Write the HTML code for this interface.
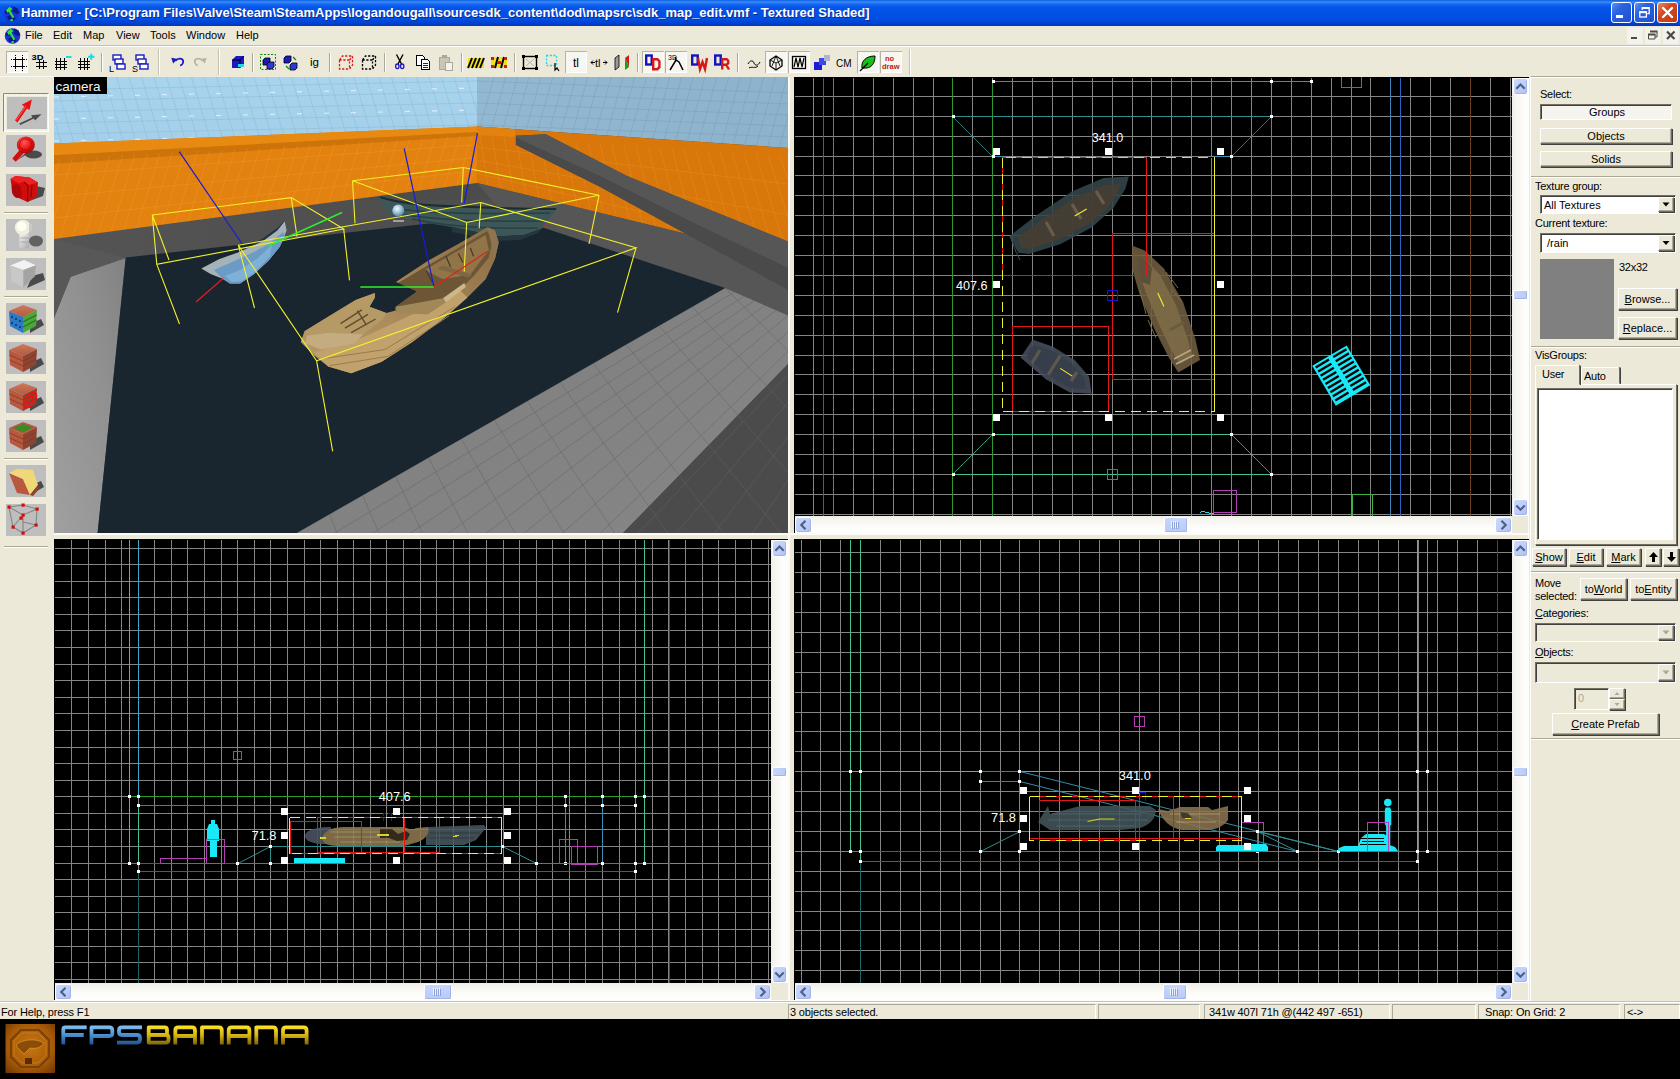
<!DOCTYPE html>
<html><head><meta charset="utf-8"><title>Hammer</title>
<style>
*{box-sizing:border-box;margin:0;padding:0}
html,body{width:1680px;height:1079px;overflow:hidden;background:#ece9d8;font-family:"Liberation Sans",sans-serif;font-size:11px;color:#000}
.a{position:absolute}
svg{position:absolute;overflow:hidden;display:block}
.t{position:absolute;white-space:nowrap;line-height:1}
.btn{position:absolute;background:#ece9d8;border:1px solid;border-color:#fff #716f64 #716f64 #fff;box-shadow:1px 1px 0 #404040, inset -1px -1px 0 #aca899;text-align:center;white-space:nowrap}
.sunk{position:absolute;border:1px solid;border-color:#716f64 #fff #fff #716f64;box-shadow:inset 1px 1px 0 #404040}
.sb{position:absolute;background:linear-gradient(90deg,#f3f1ec,#fefefb 40%,#fefefb)}
.sbh{position:absolute;background:linear-gradient(180deg,#f3f1ec,#fefefb 40%,#fefefb)}
.sbb{position:absolute;background:linear-gradient(135deg,#cbdafc,#b9cbf8);border:1px solid #fff;border-radius:3px;box-shadow:0 0 0 1px #b4c4ee inset}
</style></head><body>
<div class="a" style="left:0;top:0;width:1680px;height:26px;background:linear-gradient(180deg,#0a5ee0 0,#3a8cf8 2px,#1868f0 4px,#0455ea 7px,#0250e6 14px,#024ee2 19px,#0142d0 23px,#0138b8 26px)"></div>
<svg style="left:3px;top:5px" width="17" height="17" viewBox="0 0 16 16"><circle cx="8" cy="8.4" r="7.3" fill="#1c34d4"/><path d="M1.5 6l3-3.5 2.5 2.5-1.5 3-3 .5zM9.5 1.5l4 1.5 2 4.5-3 1-3.5-2.5zM4 10.5l4.5-1 3.5 3-3 3-4.5-2z" fill="#0b1a8c"/><path d="M2.8 4.6l3.4-3 2.6 2.2-1.8 1.7 3.6 6-1.7 1-3.4-5.9-1.2.9z" fill="#2ee82e"/><path d="M7.2 13.2l2.2.3-.3 2-2.2-.4z" fill="#2ee82e"/></svg>
<div class="t" style="left:21px;top:6px;font-size:13px;font-weight:bold;color:#fff;text-shadow:1px 1px 0 #0a2a8a;letter-spacing:0px" id="ttl">Hammer - [C:\Program Files\Valve\Steam\SteamApps\logandougall\sourcesdk_content\dod\mapsrc\sdk_map_edit.vmf - Textured Shaded]</div>
<div class="a" style="left:1611px;top:2px;width:21px;height:21px;border:1px solid #fff;border-radius:3px;background:linear-gradient(135deg,#5a93f3 0,#2a62e0 35%,#1e50d0 100%)"><svg width="21" height="21" style="left:-1px;top:-1px" viewBox="0 0 21 21"><rect x="5" y="13" width="7" height="3" fill="#fff"/></svg></div>
<div class="a" style="left:1634px;top:2px;width:21px;height:21px;border:1px solid #fff;border-radius:3px;background:linear-gradient(135deg,#5a93f3 0,#2a62e0 35%,#1e50d0 100%)"><svg width="21" height="21" style="left:-1px;top:-1px" viewBox="0 0 21 21"><path d="M8.2 8V6h7v5.6h-2" fill="none" stroke="#fff" stroke-width="1.3"/><path d="M8 6h7.4" stroke="#fff" stroke-width="2"/><rect x="5.8" y="10" width="6.6" height="5" fill="none" stroke="#fff" stroke-width="1.3"/><path d="M5.4 10.2h7.4" stroke="#fff" stroke-width="2"/></svg></div>
<div class="a" style="left:1657px;top:2px;width:21px;height:21px;border:1px solid #fff;border-radius:3px;background:linear-gradient(135deg,#e8895f 0,#d5471f 40%,#c23a12 100%)"><svg width="21" height="21" style="left:-1px;top:-1px" viewBox="0 0 21 21"><path d="M6 6l9 9M15 6l-9 9" stroke="#fff" stroke-width="2.4" stroke-linecap="round"/></svg></div>
<div class="a" style="left:0;top:26px;width:1680px;height:20px;background:#ece9d8"></div>
<svg style="left:4px;top:27px" width="17" height="17" viewBox="0 0 16 16"><circle cx="8" cy="8.4" r="7.3" fill="#1c34d4"/><path d="M1.5 6l3-3.5 2.5 2.5-1.5 3-3 .5zM9.5 1.5l4 1.5 2 4.5-3 1-3.5-2.5zM4 10.5l4.5-1 3.5 3-3 3-4.5-2z" fill="#0b1a8c"/><path d="M2.8 4.6l3.4-3 2.6 2.2-1.8 1.7 3.6 6-1.7 1-3.4-5.9-1.2.9z" fill="#2ee82e"/><path d="M7.2 13.2l2.2.3-.3 2-2.2-.4z" fill="#2ee82e"/></svg>
<div class="t" style="left:25px;top:30px;font-size:11px">File</div>
<div class="t" style="left:53px;top:30px;font-size:11px">Edit</div>
<div class="t" style="left:83px;top:30px;font-size:11px">Map</div>
<div class="t" style="left:116px;top:30px;font-size:11px">View</div>
<div class="t" style="left:150px;top:30px;font-size:11px">Tools</div>
<div class="t" style="left:186px;top:30px;font-size:11px">Window</div>
<div class="t" style="left:236px;top:30px;font-size:11px">Help</div>
<svg style="left:1626px;top:27px" width="54" height="18" viewBox="0 0 54 18">
<rect x="1" y="0.5" width="15.5" height="16.5" fill="#f3f2ec"/><rect x="19" y="0.5" width="15.5" height="16.5" fill="#f3f2ec"/><rect x="37" y="0.5" width="15.5" height="16.5" fill="#f3f2ec"/>
<rect x="5" y="10" width="6" height="2" fill="#4a4a46"/>
<path d="M24.5 4.5h6.5v5.5h-2M22.5 7.5h6.5v4.5h-6.5z" fill="none" stroke="#4a4a46" stroke-width="1"/><path d="M24 4.5h7.5M22 7.5h7.5" stroke="#4a4a46" stroke-width="2"/>
<path d="M41 4.5l7.5 7.5M48.5 4.5l-7.5 7.5" stroke="#4a4a46" stroke-width="2.2"/></svg>
<div class="a" style="left:0;top:45px;width:1680px;height:1px;background:#c5c2b2"></div>
<div class="a" style="left:0;top:46px;width:1680px;height:1px;background:#fff"></div>
<div class="a" style="left:0;top:47px;width:1680px;height:30px;background:#ece9d8" id="tb"></div>
<div class="a" style="left:0;top:77px;width:54px;height:926px;background:#ece9d8"></div>
<div class="a" style="left:0;top:76px;width:54px;height:1px;background:#f8f7f0"></div>
<div class="a" style="left:0;top:1001px;width:1680px;height:19px;background:#ece9d8"></div>
<div class="a" style="left:0;top:1001px;width:1680px;height:1px;background:#c5c2b2"></div>
<div class="a" style="left:0;top:1002px;width:1680px;height:1px;background:#fff"></div>
<div class="t" style="left:1px;top:1007px;font-size:11px;letter-spacing:-0.15px">For Help, press F1</div>
<div class="t" style="left:790px;top:1007px;font-size:11px;letter-spacing:-0.15px">3 objects selected.</div>
<div class="t" style="left:1209px;top:1007px;font-size:11px;letter-spacing:-0.15px">341w 407l 71h @(442 497 -651)</div>
<div class="t" style="left:1485px;top:1007px;font-size:11px;letter-spacing:-0.15px">Snap: On Grid: 2</div>
<div class="t" style="left:1627px;top:1007px;font-size:11px;letter-spacing:-0.15px">&lt;-&gt;</div>
<div class="a" style="left:788px;top:1004px;width:308px;height:16px;border:1px solid;border-color:#aca899 #fff #fff #aca899"></div>
<div class="a" style="left:1098px;top:1004px;width:102px;height:16px;border:1px solid;border-color:#aca899 #fff #fff #aca899"></div>
<div class="a" style="left:1204px;top:1004px;width:186px;height:16px;border:1px solid;border-color:#aca899 #fff #fff #aca899"></div>
<div class="a" style="left:1392px;top:1004px;width:84px;height:16px;border:1px solid;border-color:#aca899 #fff #fff #aca899"></div>
<div class="a" style="left:1478px;top:1004px;width:142px;height:16px;border:1px solid;border-color:#aca899 #fff #fff #aca899"></div>
<div class="a" style="left:1624px;top:1004px;width:56px;height:16px;border:1px solid;border-color:#aca899 #fff #fff #aca899"></div>
<div class="a" style="left:0;top:1019px;width:1680px;height:60px;background:#000"></div>
<div class="a" style="left:54px;top:77px;width:1476px;height:924px;background:#ece9d8"></div>
<div class="a" style="left:788px;top:77px;width:2px;height:924px;background:#fbfaf6"></div>
<div class="a" style="left:54px;top:533px;width:1476px;height:2px;background:#fbfaf6"></div>
<div class="a" style="left:1528px;top:77px;width:1px;height:924px;background:#fbfaf6"></div>
<div class="a" style="left:54px;top:1000px;width:1476px;height:1px;background:#fbfaf6"></div>
<svg style="left:54px;top:77px;background:#4c4c4c" width="734" height="456" viewBox="54 77 734 456">
<defs>
<linearGradient id="skyL" x1="0" y1="0" x2="0" y2="1"><stop offset="0" stop-color="#a9d4ee"/><stop offset="1" stop-color="#a4cfea"/></linearGradient>
<linearGradient id="skyR" x1="0" y1="0" x2="1" y2="0"><stop offset="0" stop-color="#93b9d2"/><stop offset="1" stop-color="#8db2cb"/></linearGradient>
<linearGradient id="flr" x1="0" y1="0" x2="1" y2="1"><stop offset="0" stop-color="#7e7e7e"/><stop offset="1" stop-color="#868686"/></linearGradient>
<linearGradient id="flrL" x1="1" y1="0" x2="0" y2="1"><stop offset="0" stop-color="#828282"/><stop offset="0.4" stop-color="#919191"/><stop offset="1" stop-color="#a0a0a0"/></linearGradient>
<linearGradient id="ledge" x1="0" y1="0" x2="1" y2="0"><stop offset="0" stop-color="#545454"/><stop offset="0.5" stop-color="#4e4e4e"/><stop offset="1" stop-color="#565656"/></linearGradient>
<linearGradient id="boat3" x1="0" y1="1" x2="1" y2="0"><stop offset="0" stop-color="#b89a68"/><stop offset="0.5" stop-color="#a88858"/><stop offset="1" stop-color="#8a6c44"/></linearGradient>
<radialGradient id="orb" cx="0.4" cy="0.35" r="0.7"><stop offset="0" stop-color="#f4fbff"/><stop offset="0.5" stop-color="#9cc4dc"/><stop offset="1" stop-color="#4a7892"/></radialGradient>
<clipPath id="cpF"><polygon points="725,288 788,315.5 788,364 623,533 296.6,533"/></clipPath><clipPath id="cpD"><polygon points="788,364 788,533 623,533"/></clipPath><clipPath id="cpL"><polygon points="54,77 477,77 477,127 54,144"/></clipPath><clipPath id="cpR"><polygon points="477,77 788,77 788,148 477,126.5"/></clipPath>
<clipPath id="cpWL"><polygon points="54,159 477,135 477,183 54,239"/></clipPath><clipPath id="cpWR"><polygon points="477,135 788,156 788,260 685,233.5 477,183"/></clipPath>
</defs>
<polygon points="54,200 788,200 788,400 54,400" fill="url(#ledge)" />
<polygon points="54,77 477,77 477,127 54,144" fill="url(#skyL)" />
<polygon points="477,77 788,77 788,148 477,126.5" fill="url(#skyR)" />
<path d="M41.5 77L61.5 143.7M54.0 77L73.9 143.2M66.5 77L86.2 142.7M79.0 77L98.6 142.2M91.5 77L110.9 141.7M104.0 77L123.3 141.2M116.5 77L135.6 140.7M129.0 77L148.0 140.2M141.5 77L160.3 139.7M154.0 77L172.7 139.2M166.5 77L185.0 138.7M179.0 77L197.4 138.2M191.5 77L209.7 137.7M204.0 77L222.1 137.2M216.5 77L234.4 136.7M229.0 77L246.8 136.2M241.5 77L259.1 135.7M254.0 77L271.5 135.2M266.5 77L283.8 134.7M279.0 77L296.2 134.2M291.5 77L308.5 133.7M304.0 77L320.9 133.2M316.5 77L333.2 132.7M329.0 77L345.6 132.2M341.5 77L357.9 131.7M354.0 77L370.3 131.2M366.5 77L382.6 130.7M379.0 77L395.0 130.2M391.5 77L407.3 129.7M404.0 77L419.7 129.2M416.5 77L432.0 128.7M429.0 77L444.4 128.2M441.5 77L456.7 127.7M454.0 77L469.1 127.2M466.5 77L481.4 126.7M479.0 77L493.8 126.2M491.5 77L506.1 125.7" stroke="#86afca" stroke-width="0.7" opacity="0.55" fill="none" clip-path="url(#cpL)"/>
<path d="M54 90L477 81M54 101L477 92M54 112L477 103M54 123L477 114M54 134L477 125M54 145L477 136" stroke="#86afca" stroke-width="0.7" opacity="0.55" fill="none" clip-path="url(#cpL)"/>
<path d="M54 97L477 88M54 119L477 110M54 141L477 132" stroke="#e8f4fc" stroke-width="1.2" stroke-dasharray="5 22" opacity="0.8" fill="none" clip-path="url(#cpL)"/>
<path d="M494.1 77L480.0 127.2M505.8 77L491.5 128.0M517.5 77L503.0 128.8M529.2 77L514.5 129.6M541.0 77L526.0 130.4M552.7 77L537.5 131.2M564.4 77L549.0 132.0M576.1 77L560.5 132.8M587.9 77L572.0 133.7M599.6 77L583.5 134.5M611.3 77L595.0 135.3M623.0 77L606.5 136.1M634.8 77L618.0 136.9M646.5 77L629.5 137.7M658.2 77L641.0 138.5M669.9 77L652.5 139.3M681.7 77L664.0 140.1M693.4 77L675.5 140.9M705.1 77L687.0 141.7M716.8 77L698.5 142.5M728.6 77L710.0 143.3M740.3 77L721.5 144.1M752.0 77L733.0 144.9M763.7 77L744.5 145.7M775.5 77L756.0 146.5M787.2 77L767.5 147.3M798.9 77L779.0 148.1M810.6 77L790.5 148.9M822.4 77L802.0 149.8M834.1 77L813.5 150.6M477 81L788 93M477 92L788 104M477 103L788 115M477 114L788 126M477 125L788 137M477 136L788 148" stroke="#7398b2" stroke-width="0.7" opacity="0.55" fill="none" clip-path="url(#cpR)"/>
<polygon points="54,143.5 477,126.5 477,183 54,239" fill="#e3820e" />
<polygon points="54,143.5 477,126.5 477,132 54,155.3" fill="#e88a12" />
<polygon points="54,155.3 477,132 477,136 54,163.7" fill="#cc730a" />
<polygon points="477,126.5 788,148 788,260 685,233.5 477,183" fill="#d9770a" />
<polygon points="477,126.5 515,129 515,137 477,135" fill="#e3820e" />
<path d="M60.0 158.7L34.0 242.7M72.5 158.0L46.5 242.0M85.0 157.2L59.0 241.2M97.5 156.5L71.5 240.5M110.0 155.8L84.0 239.8M122.5 155.1L96.5 239.1M135.0 154.4L109.0 238.4M147.5 153.7L121.5 237.7M160.0 153.0L134.0 237.0M172.5 152.3L146.5 236.3M185.0 151.6L159.0 235.6M197.5 150.9L171.5 234.9M210.0 150.2L184.0 234.2M222.5 149.4L196.5 233.4M235.0 148.7L209.0 232.7M247.5 148.0L221.5 232.0M260.0 147.3L234.0 231.3M272.5 146.6L246.5 230.6M285.0 145.9L259.0 229.9M297.5 145.2L271.5 229.2M310.0 144.5L284.0 228.5M322.5 143.8L296.5 227.8M335.0 143.1L309.0 227.1M347.5 142.4L321.5 226.4M360.0 141.6L334.0 225.6M372.5 140.9L346.5 224.9M385.0 140.2L359.0 224.2M397.5 139.5L371.5 223.5M410.0 138.8L384.0 222.8M422.5 138.1L396.5 222.1M435.0 137.4L409.0 221.4M447.5 136.7L421.5 220.7M460.0 136.0L434.0 220.0M472.5 135.3L446.5 219.3M485.0 134.6L459.0 218.6M497.5 133.9L471.5 217.9M510.0 133.1L484.0 217.1M522.5 132.4L496.5 216.4M535.0 131.7L509.0 215.7M547.5 131.0L521.5 215.0M54 175.0L477 144.6M54 196.6L477 157.6M54 218.2L477 170.5" stroke="#f2a448" stroke-width="0.7" opacity="0.42" fill="none" clip-path="url(#cpWL)"/>
<path d="M480.0 135.2L494.0 225.2M492.0 136.0L506.6 226.0M504.0 136.8L519.2 226.8M516.0 137.6L531.8 227.6M528.0 138.4L544.4 228.4M540.0 139.3L557.0 229.3M552.0 140.1L569.6 230.1M564.0 140.9L582.2 230.9M576.0 141.7L594.8 231.7M588.0 142.5L607.4 232.5M600.0 143.3L620.0 233.3M612.0 144.1L632.6 234.1M624.0 144.9L645.2 234.9M636.0 145.7L657.8 235.7M648.0 146.5L670.4 236.5M660.0 147.4L683.0 237.4M672.0 148.2L695.6 238.2M684.0 149.0L708.2 239.0M696.0 149.8L720.8 239.8M708.0 150.6L733.4 240.6M720.0 151.4L746.0 241.4M732.0 152.2L758.6 242.2M744.0 153.0L771.2 243.0M756.0 153.8L783.8 243.8M768.0 154.6L796.4 244.6M780.0 155.5L809.0 245.5M792.0 156.3L821.6 246.3M804.0 157.1L834.2 247.1M477 147.0L788 184.0M477 160.2L788 214.8M477 173.4L788 245.6" stroke="#eea040" stroke-width="0.7" opacity="0.38" fill="none" clip-path="url(#cpWR)"/>
<polygon points="515.8,135.8 545.8,134.2 627,176 693,203 788,241.5 788,290 685,233.5 600,187 515.8,145" fill="#4a4a4a" />
<polygon points="515.8,135.8 545.8,134.2 627,176 693,203 788,241.5 788,268 690,221 600,176 515.8,137.5" fill="#565656" />
<polygon points="477,183 685,233.5 788,290 788,316 725,288 505,215" fill="#565656" />
<polygon points="725,288 788,315.5 788,364 623,533 296.6,533" fill="url(#flr)" />
<path d="M1037.7 109.2L-148.1 787.3M1037.7 109.2L-87.3 787.3M1037.7 109.2L-26.5 787.3M1037.7 109.2L34.3 787.3M1037.7 109.2L95.1 787.3M1037.7 109.2L155.9 787.3M1037.7 109.2L216.7 787.3M1037.7 109.2L277.5 787.3M1037.7 109.2L338.3 787.3M1037.7 109.2L399.1 787.3M1037.7 109.2L459.9 787.3M1037.7 109.2L520.7 787.3M1037.7 109.2L581.5 787.3M1037.7 109.2L642.3 787.3M296.6 533.0L483.9 1055.5M329.6 514.2L533.3 1027.2M362.5 495.3L582.8 999.0M395.5 476.5L632.2 970.7M428.4 457.6L681.6 942.4M461.4 438.8L731.1 914.2M494.3 419.9L780.5 885.9M527.3 401.1L829.9 857.6M560.2 382.2L879.3 829.3M593.2 363.4L928.8 801.1M626.1 344.5L978.2 772.8M659.1 325.7L1027.6 744.5M692.0 306.8L1077.1 716.3M725.0 288.0L1126.5 688.0M758.0 269.2L1175.9 659.7M790.9 250.3L1225.4 631.5" stroke="#6c6c6c" stroke-width="0.9" opacity="0.75" fill="none" clip-path="url(#cpF)"/>
<polygon points="788,364 788,533 623,533" fill="#4b4b4b" />
<path d="M1037.7 109.2L-148.1 787.3M1037.7 109.2L-87.3 787.3M1037.7 109.2L-26.5 787.3M1037.7 109.2L34.3 787.3M1037.7 109.2L95.1 787.3M1037.7 109.2L155.9 787.3M1037.7 109.2L216.7 787.3M1037.7 109.2L277.5 787.3M1037.7 109.2L338.3 787.3M1037.7 109.2L399.1 787.3M1037.7 109.2L459.9 787.3M1037.7 109.2L520.7 787.3M1037.7 109.2L581.5 787.3M1037.7 109.2L642.3 787.3M296.6 533.0L483.9 1055.5M329.6 514.2L533.3 1027.2M362.5 495.3L582.8 999.0M395.5 476.5L632.2 970.7M428.4 457.6L681.6 942.4M461.4 438.8L731.1 914.2M494.3 419.9L780.5 885.9M527.3 401.1L829.9 857.6M560.2 382.2L879.3 829.3M593.2 363.4L928.8 801.1M626.1 344.5L978.2 772.8M659.1 325.7L1027.6 744.5M692.0 306.8L1077.1 716.3M725.0 288.0L1126.5 688.0M758.0 269.2L1175.9 659.7M790.9 250.3L1225.4 631.5" stroke="#606060" stroke-width="0.9" opacity="0.7" fill="none" clip-path="url(#cpD)"/>
<polygon points="125.7,258 70.7,276.7 54,318 54,533 97.6,533" fill="url(#flrL)" />
<polygon points="54,239 54,318 70.7,276.7 125.7,258" fill="#585858" />
<polygon points="125.7,257.5 505,215 725,288 296.6,533 97.6,533" fill="#19262f" />
<polygon points="378.3,195.7 399.3,202.3 428.1,204.2 462.1,204.9 504.1,208.2 557.7,208.2 549.9,218 542,228.5 523.7,235 497.5,236.3 451.7,227.1 412.4,220.6 388.8,214 381,202.3" fill="#3d5759" />
<path d="M392 208C430 214 480 214 550 213M400 214C440 221 490 222 546 221M412 219C450 227 500 229 538 228" stroke="#2a3f42" stroke-width="1.6" fill="none"/>
<path d="M380 197C400 204 430 206 462 206.5C500 208 530 209.5 556 209" stroke="#1e2c30" stroke-width="2" fill="none"/>
<polygon points="451.7,227.1 497.5,236.3 523.7,235 542,228.5 538,233 520,240 495,241 452,232" fill="#25363f" />
<polygon points="240,252 263.4,238 277.3,228 284.7,220.5 283,226 270,238 250,250" fill="#25313f" />
<polygon points="201.3,268.6 218.9,259.3 239.3,251.9 263.4,240.8 277.3,230.6 284.7,221.3 286.6,230.6 280.1,246.3 269,260.2 254.1,274.1 240.2,283.4 230,283.4 222.6,278.8 210.6,274.1" fill="#a5b2b8" />
<polygon points="214,270 232,262 252,253 270,243 283,232 285,236 279,248 268,261 253,275 240,283.4 230,283.4 222.6,278.8" fill="#6a9cc6" />
<polygon points="225,276 240,270 258,258 272,245 270,256 256,271 242,281 232,282" fill="#7fb0d6" />
<polygon points="300.7,341.9 304.5,331.2 334.3,312.9 355.7,299.9 374.9,293.0 395.5,282.3 427.6,260.9 458.2,244.1 487.2,227.2 494.9,230.3 498.7,242.5 494.9,259.3 485.7,279.2 467.4,297.6 442.9,319.0 412.3,341.9 381.7,361.8 351.2,373.3 328.2,366.4 314.5,355.7" fill="url(#boat3)" />
<polygon points="314.5,352.6 363.4,337.3 412.3,314.4 458.2,288.4 467.4,297.6 442.9,319.0 412.3,341.9 381.7,361.8 351.2,373.3 328.2,366.4" fill="#c2a26c" />
<path d="M322.1 358.7 L384.8 349.6 L455.1 306.7 M329.8 365.6 L387.9 356.4 L449.0 315.9" stroke="#9a7c4c" stroke-width="1" fill="none"/>
<polygon points="395.5,284.6 427.6,265.5 458.2,247.9 487.2,231.1 492.6,239.5 488.8,257.8 473.5,276.2 465.8,283.8 442.9,300.6 397.0,312.9 395.5,306.7 416.9,291.5" fill="#6c5636" />
<polygon points="424.6,270.0 485.7,234.9 488.8,250.2 470.4,274.6 442.9,279.2" fill="#917548" />
<path d="M426.1 270.0 L432.2 282.3 M446.0 256.3 L450.6 267.0 M458.2 253.2 L462.8 262.4 M470.4 247.9 L473.5 256.3" stroke="#4a3b26" stroke-width="1.3" fill="none"/>
<polygon points="436.8,268.5 442.9,265.5 472.0,274.6 468.9,277.7" fill="#7d6744" />
<polygon points="442.9,298.3 464.3,283.0 465.8,286.9 446.0,302.2" fill="#cdb68a" />
<polygon points="395.5,306.7 442.9,298.3 446.0,302.2 427.6,314.4 397.0,312.9" fill="#a08858" />
<polygon points="374.9,292.2 395.5,281.8 416.9,291.5 395.5,306.7 395.5,310.6 386.3,312.9 369.5,306.7 374.9,297.6" fill="#19262f" />
<polygon points="304.5,331.2 334.3,312.9 355.7,299.9 374.9,293.0 374.9,297.6 369.5,306.7 386.3,312.9 383.3,319.0 363.4,334.3 328.2,332.7 306.8,335.8" fill="#b59a66" />
<path d="M340.5 323.6 L361.9 309.8 M345.0 328.1 L368.0 314.4 M351.2 332.7 L375.6 319.0 M357.3 310.6 L366.5 325.1" stroke="#5e4c30" stroke-width="1.4" fill="none"/>
<polygon points="306.8,335.8 328.2,332.7 363.4,334.3 354.2,343.4 320.6,349.6 305.3,343.4" fill="#c4ac80" />
<polygon points="487.2,227.2 494.9,230.3 498.7,242.5 494.9,259.3 491.8,245.6" fill="#8f7450" />
<!--3DAXES-->
<path d="M152.3 215L291.3 197.6L343.7 229L156.8 264.4ZM152.3 215L169 260M291.3 197.6L297 236.5M343.7 229L349.5 280.4M156.8 264.4L179.5 324M352.5 180.8L463.3 167.5L599 195.3L466.7 222.5ZM352.5 180.8L355 223.3M463.3 167.5L461.7 202.5M599 195.3L589 244M466.7 222.5L464.2 271.7M238.4 245.3L480.8 202.5L636 247.8L316.6 360.8ZM238.4 245.3L254.5 308M480.8 202.5L479.2 228.3M636 247.8L617.5 312.6M316.6 360.8L332.7 451.4" stroke="#f2f22a" stroke-width="1.1" fill="none"/>
<path d="M179.3 151.7L242.2 244M477.5 133L464.2 203.3M404.2 148.3L433.9 287" stroke="#1a1ad8" stroke-width="1.2" fill="none"/>
<path d="M342 212.5L268 246M360.3 287L433.9 287" stroke="#2cf02c" stroke-width="1.4" fill="none"/>
<path d="M196 302L223 278.5M433.9 287L487.5 251.3M543 227l4-2" stroke="#e02020" stroke-width="1.2" fill="none"/>
<circle cx="398.3" cy="210.5" r="6" fill="url(#orb)"/><path d="M393 221h11" stroke="#d8d8d8" stroke-width="1.2"/>
<rect x="54" y="77" width="53" height="17" fill="#000"/><text x="55.5" y="90.5" font-family="Liberation Sans" font-size="13" fill="#f4f4f4" textLength="45" lengthAdjust="spacingAndGlyphs">camera</text>
</svg>
<svg style="left:794px;top:77px;background:#000" width="718" height="439" viewBox="794 77 718 439" shape-rendering="crispEdges">
<path d="M813.5 78V516M833.5 78V516M853.5 78V516M873.5 78V516M893.5 78V516M913.5 78V516M933.5 78V516M952.5 78V516M972.5 78V516M992.5 78V516M1012.5 78V516M1032.5 78V516M1052.5 78V516M1072.5 78V516M1092.5 78V516M1112.5 78V516M1132.5 78V516M1151.5 78V516M1171.5 78V516M1191.5 78V516M1211.5 78V516M1231.5 78V516M1251.5 78V516M1271.5 78V516M1291.5 78V516M1311.5 78V516M1331.5 78V516M1351.5 78V516M1370.5 78V516M1390.5 78V516M1410.5 78V516M1430.5 78V516M1450.5 78V516M1470.5 78V516M1490.5 78V516M1510.5 78V516M795 96.5H1512M795 116.5H1512M795 136.5H1512M795 156.5H1512M795 175.5H1512M795 195.5H1512M795 215.5H1512M795 235.5H1512M795 255.5H1512M795 275.5H1512M795 295.5H1512M795 315.5H1512M795 335.5H1512M795 355.5H1512M795 374.5H1512M795 394.5H1512M795 414.5H1512M795 434.5H1512M795 454.5H1512M795 474.5H1512M795 494.5H1512M795 514.5H1512" stroke="#848484" stroke-width="1" fill="none"/>
<path d="M823.5 78V516" stroke="#2c5fc4" stroke-width="1" fill="none"/>
<path d="M833.5 78V516" stroke="#3d85b8" stroke-width="1" fill="none"/>
<path d="M952.5 78V516" stroke="#2f9a2f" stroke-width="1" fill="none"/>
<path d="M992.5 81V516" stroke="#2f9a2f" stroke-width="1" fill="none"/>
<path d="M1390.5 78V516" stroke="#3d85b8" stroke-width="1" fill="none"/>
<path d="M1400.5 78V516" stroke="#2c5fc4" stroke-width="1" fill="none"/>
<path d="M1470.5 78V516" stroke="#6e3c1c" stroke-width="1" fill="none"/>
<path d="M1231.5 157V435" stroke="#3c90b8" stroke-width="1" fill="none"/>
<path d="M1271.5 116V474" stroke="#3c90b8" stroke-width="1" fill="none"/>
<path d="M1271.5 81V116" stroke="#8a8a8a" stroke-width="1" fill="none"/>
<path d="M993 81.5H1312" stroke="#3c90b8" stroke-width="1" fill="none"/>
<path d="M953 116.5H1272" stroke="#2f8f8f" stroke-width="1" fill="none"/>
<path d="M952.5 116.5L992.5 156.5" stroke="#2f8f8f" stroke-width="0.8" fill="none" shape-rendering="geometricPrecision" />
<path d="M1271.5 116.5L1231.5 156.5" stroke="#2f8f8f" stroke-width="0.8" fill="none" shape-rendering="geometricPrecision" />
<path d="M993 156.5H1003" stroke="#3c90b8" stroke-width="1" fill="none"/>
<path d="M1214 156.5H1232" stroke="#3c90b8" stroke-width="1" fill="none"/>
<path d="M993 434.5H1232" stroke="#42c090" stroke-width="1" fill="none"/>
<path d="M953 474.5H1272" stroke="#42c090" stroke-width="1" fill="none"/>
<path d="M992.5 434.5L952.5 474.5" stroke="#42c090" stroke-width="0.8" fill="none" shape-rendering="geometricPrecision" />
<path d="M1231.5 434.5L1271.5 474.5" stroke="#42c090" stroke-width="0.8" fill="none" shape-rendering="geometricPrecision" />
<rect x="992" y="80" width="3" height="3" fill="#fff"/>
<rect x="1270" y="80" width="3" height="3" fill="#fff"/>
<rect x="1310" y="80" width="3" height="3" fill="#fff"/>
<rect x="952" y="115" width="3" height="3" fill="#fff"/>
<rect x="1270" y="115" width="3" height="3" fill="#fff"/>
<rect x="992" y="155" width="3" height="3" fill="#fff"/>
<rect x="1230" y="155" width="3" height="3" fill="#fff"/>
<rect x="992" y="433" width="3" height="3" fill="#fff"/>
<rect x="1230" y="433" width="3" height="3" fill="#fff"/>
<rect x="952" y="473" width="3" height="3" fill="#fff"/>
<rect x="1270" y="473" width="3" height="3" fill="#fff"/>
<path d="M1341.5 77V87.5H1361.5V77" stroke="#b43cb4" fill="none"/>
<rect x="1107.5" y="469.5" width="10" height="10" stroke="#b43cb4" fill="none"/>
<rect x="1213.5" y="490.5" width="23" height="22" stroke="#b43cb4" fill="none"/>
<rect x="1352.5" y="494.5" width="20" height="24" stroke="#3cb43c" fill="none"/>
<path d="M1200 513l2-2 3 1 4 1 5 1" stroke="#1fd8e8" fill="none"/>
<g transform="translate(1312.2,365.8) rotate(-30.6)" shape-rendering="geometricPrecision"><rect x="0" y="0" width="40.1" height="46.3" fill="#18e8f8"/><rect x="2.2" y="2.0" width="15.4" height="2.3" fill="#000"/><rect x="22.6" y="2.0" width="15.4" height="2.3" fill="#000"/><rect x="2.2" y="6.8" width="15.4" height="2.3" fill="#000"/><rect x="22.6" y="6.8" width="15.4" height="2.3" fill="#000"/><rect x="2.2" y="11.6" width="15.4" height="2.3" fill="#000"/><rect x="22.6" y="11.6" width="15.4" height="2.3" fill="#000"/><rect x="2.2" y="16.4" width="15.4" height="2.3" fill="#000"/><rect x="22.6" y="16.4" width="15.4" height="2.3" fill="#000"/><rect x="2.2" y="21.2" width="15.4" height="2.3" fill="#000"/><rect x="22.6" y="21.2" width="15.4" height="2.3" fill="#000"/><rect x="2.2" y="26.0" width="15.4" height="2.3" fill="#000"/><rect x="22.6" y="26.0" width="15.4" height="2.3" fill="#000"/><rect x="2.2" y="30.8" width="15.4" height="2.3" fill="#000"/><rect x="22.6" y="30.8" width="15.4" height="2.3" fill="#000"/><rect x="2.2" y="35.6" width="15.4" height="2.3" fill="#000"/><rect x="22.6" y="35.6" width="15.4" height="2.3" fill="#000"/><rect x="2.2" y="40.4" width="15.4" height="2.3" fill="#000"/><rect x="22.6" y="40.4" width="15.4" height="2.3" fill="#000"/></g>
<polygon points="1009.6,235.9 1036.1,215.4 1072.3,191.3 1103.6,178.1 1128.9,176.4 1125.3,188.9 1113.3,208.2 1091.6,227.5 1060.2,244.3 1028.9,254 1018.1,252.8" fill="#33454a" shape-rendering="geometricPrecision" opacity="0.88"/>
<polygon points="1018,238 1040,221 1074,198 1104,185 1121,184 1116,196 1106,210 1087,225 1058,240 1030,249 1021,248" fill="#493d31" shape-rendering="geometricPrecision" opacity="0.85"/>
<path d="M1046 222l8 14M1072 204l9 15M1096 191l8 13" stroke="#6a5c48" stroke-width="3.2" shape-rendering="geometricPrecision" fill="none"/>
<path d="M1010 236l6 16 4 8" stroke="#3c5054" stroke-width="1" shape-rendering="geometricPrecision" fill="none"/>
<polygon points="1132,245.5 1144.6,250.4 1163.9,268.4 1183.1,302.2 1195.2,338.3 1200,360 1178.3,372.5 1168.7,357.6 1154.2,328.7 1139.8,294.9 1132,268.4" fill="#6e5d40" shape-rendering="geometricPrecision" opacity="0.88"/>
<polygon points="1137,256 1146,260 1160,275 1176,305 1188,340 1192,357 1180,364 1171,350 1158,322 1146,293 1138,270" fill="#806c46" shape-rendering="geometricPrecision" opacity="0.85"/>
<polygon points="1137,256 1146,260 1152,268 1150,285 1142,282 1138,270" fill="#5c4e38" shape-rendering="geometricPrecision"/>
<path d="M1176 364l18-9M1174 359l17-9" stroke="#b8a888" stroke-width="1.5" shape-rendering="geometricPrecision" fill="none"/><path d="M1170 330l14-8" stroke="#6a5a40" stroke-width="3" shape-rendering="geometricPrecision"/>
<path d="M1166 272l12 16M1172 290l10 12M1140 290l6 24M1148 320l8 18" stroke="#7d6a48" stroke-width="1" shape-rendering="geometricPrecision" fill="none"/>
<polygon points="1032.5,339.5 1020.5,357.6 1045.8,379.3 1069.9,392.5 1091.6,393.7 1089.2,376.9 1074.7,360 1053,346.7" fill="#474e5b" shape-rendering="geometricPrecision" opacity="0.88"/>
<polygon points="1033,345 1026,357 1047,375 1070,388 1086,389 1084,377 1071,363 1051,350" fill="#363d4a" shape-rendering="geometricPrecision" opacity="0.85"/>
<path d="M1040 350l-8 13M1060 356l-12 19M1077 372l-6 9" stroke="#5e584c" stroke-width="3.2" shape-rendering="geometricPrecision" fill="none"/>
<path d="M1074.7 215.9L1086.7 208.9M1157.8 293L1163.9 306.5M1060.2 368.4L1072.3 376.1" stroke="#f0f030" stroke-width="1.1" shape-rendering="geometricPrecision" fill="none"/>
<rect x="1002.5" y="157.5" width="144" height="118" stroke="#e01818" fill="none"/>
<rect x="1112.5" y="233.5" width="102" height="146" stroke="#e01818" fill="none"/>
<rect x="1012.5" y="326.5" width="96" height="85" stroke="#e01818" fill="none"/>
<rect x="1107.5" y="290.5" width="10" height="10" stroke="#1414d8" fill="none"/>
<path d="M1002.5 157.5V411.5" stroke="#f0f030" stroke-dasharray="10 6" fill="none"/>
<path d="M1002.5 411.5H1214.5" stroke="#f0f030" stroke-dasharray="10 6" fill="none"/>
<path d="M1214.5 157.5V411.5" stroke="#f0f030" fill="none"/>
<path d="M1146.5 157.5H1214.5" stroke="#000" fill="none"/>
<path d="M1002.5 157.5H1214.5" stroke="#a8f040" stroke-dasharray="10 6" stroke-dashoffset="13" fill="none"/>
<rect x="993" y="148" width="7" height="7" fill="#fff"/>
<rect x="1105" y="148" width="7" height="7" fill="#fff"/>
<rect x="1217" y="148" width="7" height="7" fill="#fff"/>
<rect x="993" y="281" width="7" height="7" fill="#fff"/>
<rect x="1217" y="281" width="7" height="7" fill="#fff"/>
<rect x="993" y="414" width="7" height="7" fill="#fff"/>
<rect x="1105" y="414" width="7" height="7" fill="#fff"/>
<rect x="1217" y="414" width="7" height="7" fill="#fff"/>
<text x="1091.7" y="142.2" font-family="Liberation Sans" font-size="13.5" fill="#fff" shape-rendering="geometricPrecision" textLength="31.5" lengthAdjust="spacingAndGlyphs">341.0</text>
<text x="956" y="289.5" font-family="Liberation Sans" font-size="13.5" fill="#fff" textLength="31.5" lengthAdjust="spacingAndGlyphs">407.6</text>
</svg>
<div class="a" style="left:1512px;top:78px;width:17px;height:438px;background:linear-gradient(90deg,#efeee7 0,#f6f5f0 25%,#fdfdfb 70%,#fefefd 100%)"></div><div class="a" style="left:1513px;top:78px;width:15px;height:17px;border-radius:3px;border:1px solid #fdfdff;background:linear-gradient(135deg,#cad8fc 0,#bfcffa 50%,#b0c1f2 100%);box-shadow:inset -1px -1px 0 #a3b5e8"><svg width="15" height="17" style="left:-1px;top:-1px" shape-rendering="geometricPrecision"><path d="M3.3 10.7L7.5 6.5l4.2 4.2" fill="none" stroke="#4d6185" stroke-width="2.2"/></svg></div><div class="a" style="left:1513px;top:499px;width:15px;height:17px;border-radius:3px;border:1px solid #fdfdff;background:linear-gradient(135deg,#cad8fc 0,#bfcffa 50%,#b0c1f2 100%);box-shadow:inset -1px -1px 0 #a3b5e8"><svg width="15" height="17" style="left:-1px;top:-1px" shape-rendering="geometricPrecision"><path d="M3.3 6.5L7.5 10.7l4.2 -4.2" fill="none" stroke="#4d6185" stroke-width="2.2"/></svg></div><div class="a" style="left:1513px;top:290px;width:15px;height:10px;border-radius:2px;border:1px solid #fdfdff;background:linear-gradient(90deg,#c8d6fb,#b9caf6);box-shadow:inset -1px -1px 0 #a3b5e8"></div>
<div class="a" style="left:795px;top:516px;width:717px;height:17px;background:linear-gradient(180deg,#efeee7 0,#f6f5f0 25%,#fdfdfb 70%,#fefefd 100%)"></div><div class="a" style="left:795px;top:517px;width:17px;height:16px;border-radius:3px;border:1px solid #fdfdff;background:linear-gradient(135deg,#cad8fc 0,#bfcffa 50%,#b0c1f2 100%);box-shadow:inset -1px -1px 0 #a3b5e8"><svg width="17" height="16" style="left:-1px;top:-1px" shape-rendering="geometricPrecision"><path d="M10.5 3.8L6.3 8.0l4.2 4.2" fill="none" stroke="#4d6185" stroke-width="2.2"/></svg></div><div class="a" style="left:1495px;top:517px;width:17px;height:16px;border-radius:3px;border:1px solid #fdfdff;background:linear-gradient(135deg,#cad8fc 0,#bfcffa 50%,#b0c1f2 100%);box-shadow:inset -1px -1px 0 #a3b5e8"><svg width="17" height="16" style="left:-1px;top:-1px" shape-rendering="geometricPrecision"><path d="M6.5 3.8L10.7 8.0l-4.2 4.2" fill="none" stroke="#4d6185" stroke-width="2.2"/></svg></div><div class="a" style="left:1164px;top:517px;width:24px;height:16px;border-radius:2px;border:1px solid #fdfdff;background:linear-gradient(180deg,#c8d6fb,#b9caf6);box-shadow:inset -1px -1px 0 #a3b5e8"><svg width="24" height="16" style="left:-1px;top:-1px" shape-rendering="crispEdges"><path d="M7.5 4v7M9.5 4v7M11.5 4v7M13.5 4v7" stroke="#eef3ff" stroke-width="1"/><path d="M8.5 5v7M10.5 5v7M12.5 5v7M14.5 5v7" stroke="#8ca0d8" stroke-width="1"/></svg></div>
<div class="a" style="left:794px;top:516px;width:1px;height:17px;background:#000"></div>
<div class="a" style="left:1512px;top:77px;width:17px;height:1px;background:#000"></div>
<svg style="left:54px;top:539px;background:#000" width="717" height="444" viewBox="54 539 717 444" shape-rendering="crispEdges">
<path d="M71.5 540V983M88.5 540V983M105.5 540V983M121.5 540V983M138.5 540V983M154.5 540V983M171.5 540V983M187.5 540V983M204.5 540V983M221.5 540V983M237.5 540V983M254.5 540V983M270.5 540V983M287.5 540V983M304.5 540V983M320.5 540V983M337.5 540V983M353.5 540V983M370.5 540V983M386.5 540V983M403.5 540V983M420.5 540V983M436.5 540V983M453.5 540V983M469.5 540V983M486.5 540V983M503.5 540V983M519.5 540V983M536.5 540V983M552.5 540V983M569.5 540V983M585.5 540V983M602.5 540V983M619.5 540V983M635.5 540V983M652.5 540V983M668.5 540V983M685.5 540V983M702.5 540V983M718.5 540V983M735.5 540V983M751.5 540V983M768.5 540V983M55 548.5H771M55 564.5H771M55 581.5H771M55 597.5H771M55 614.5H771M55 630.5H771M55 647.5H771M55 664.5H771M55 680.5H771M55 697.5H771M55 713.5H771M55 730.5H771M55 747.5H771M55 763.5H771M55 780.5H771M55 796.5H771M55 813.5H771M55 829.5H771M55 846.5H771M55 863.5H771M55 879.5H771M55 896.5H771M55 912.5H771M55 929.5H771M55 946.5H771M55 962.5H771M55 979.5H771" stroke="#848484" stroke-width="1" fill="none"/>
<path d="M129.5 540V863" stroke="#42c090" stroke-width="1" fill="none"/>
<path d="M138.5 540V796" stroke="#3aa8c8" stroke-width="1" fill="none"/>
<path d="M138.5 805V863" stroke="#42c090" stroke-width="1" fill="none"/>
<path d="M138.5 871V983" stroke="#1f6464" stroke-width="1" fill="none"/>
<path d="M635.5 540V796" stroke="#3ca0e0" stroke-width="1" fill="none"/>
<path d="M635.5 805V863" stroke="#42c090" stroke-width="1" fill="none"/>
<path d="M644.5 540V863" stroke="#42c090" stroke-width="1" fill="none"/>
<path d="M669.5 540V983" stroke="#6e3c1c" stroke-width="1" fill="none"/>
<path d="M130 796.5H645" stroke="#2f9a2f" stroke-width="1" fill="none"/>
<path d="M138 805.5H636" stroke="#2f9a2f" stroke-width="1" fill="none"/>
<path d="M130 863.5H645" stroke="#2f8f8f" stroke-width="1" fill="none"/>
<path d="M139 863.5H238" stroke="#2c5fa0" stroke-width="1" fill="none"/>
<path d="M138 871.5H636" stroke="#2c5fa0" stroke-width="1" fill="none"/>
<path d="M565.5 796V864" stroke="#3c90b8" stroke-width="1" fill="none"/>
<path d="M602.5 796V864" stroke="#3c90b8" stroke-width="1" fill="none"/>
<path d="M238 863.5L270.5 846.5" stroke="#2f8f8f" stroke-width="1" fill="none" shape-rendering="geometricPrecision" />
<path d="M270.5 846V864" stroke="#2f8f8f" stroke-width="1" fill="none"/>
<path d="M270 846.5H503" stroke="#2f8f8f" stroke-width="1" fill="none"/>
<path d="M502.5 846.5L536.5 863.5" stroke="#2f8f8f" stroke-width="1" fill="none" shape-rendering="geometricPrecision" />
<rect x="128" y="795" width="3" height="3" fill="#fff"/>
<rect x="137" y="795" width="3" height="3" fill="#fff"/>
<rect x="137" y="804" width="3" height="3" fill="#fff"/>
<rect x="128" y="862" width="3" height="3" fill="#fff"/>
<rect x="137" y="862" width="3" height="3" fill="#fff"/>
<rect x="137" y="870" width="3" height="3" fill="#fff"/>
<rect x="634" y="795" width="3" height="3" fill="#fff"/>
<rect x="643" y="795" width="3" height="3" fill="#fff"/>
<rect x="634" y="804" width="3" height="3" fill="#fff"/>
<rect x="634" y="862" width="3" height="3" fill="#fff"/>
<rect x="643" y="862" width="3" height="3" fill="#fff"/>
<rect x="634" y="870" width="3" height="3" fill="#fff"/>
<rect x="564" y="795" width="3" height="3" fill="#fff"/>
<rect x="601" y="795" width="3" height="3" fill="#fff"/>
<rect x="564" y="804" width="3" height="3" fill="#fff"/>
<rect x="601" y="804" width="3" height="3" fill="#fff"/>
<rect x="564" y="862" width="3" height="3" fill="#fff"/>
<rect x="601" y="862" width="3" height="3" fill="#fff"/>
<rect x="236" y="862" width="3" height="3" fill="#fff"/>
<rect x="269" y="845" width="3" height="3" fill="#fff"/>
<rect x="269" y="862" width="3" height="3" fill="#fff"/>
<rect x="501" y="845" width="3" height="3" fill="#fff"/>
<rect x="535" y="862" width="3" height="3" fill="#fff"/>
<rect x="160.5" y="858.5" width="46" height="5" stroke="#b43cb4" fill="none"/>
<rect x="206.5" y="839.5" width="18" height="24" stroke="#b43cb4" fill="none"/>
<rect x="233.5" y="751.5" width="8" height="8" stroke="#b43cb4" fill="none"/>
<rect x="559.5" y="839.5" width="18" height="24" stroke="#b43cb4" fill="none"/>
<rect x="571.5" y="846.5" width="26" height="18" stroke="#b43cb4" fill="none"/>
<path d="M211 820h4v4h2l2 5v12h-2v16h-7v-16h-3v-12l2-5h2z" fill="#18e8f8" shape-rendering="geometricPrecision"/>
<rect x="206.5" y="839.5" width="18" height="24" stroke="#b43cb4" fill="none"/>
<rect x="294" y="858" width="51" height="5" fill="#18e8f8"/>
<g opacity="0.88"><path d="M305 836c0-5 8-8 20-9l6 0 0 17c-14 1-26-2-26-8z" fill="#4a5665" shape-rendering="geometricPrecision"/>
<path d="M426 827l58-2 2 3-10 12-12 5h-38z" fill="#48585e" shape-rendering="geometricPrecision"/>
<path d="M430 833h50M430 838h44" stroke="#3a484e" stroke-width="1.5" shape-rendering="geometricPrecision"/>
<path d="M322 838c2-7 10-11 22-11h60l8 3 4-2 12-1c2 6-2 12-10 15l-14 4h-66c-10 0-16-3-16-8z" fill="#8e7850" shape-rendering="geometricPrecision"/>
<path d="M330 832h66M334 837h60M340 842h60" stroke="#a89068" stroke-width="1.6" shape-rendering="geometricPrecision"/>
<path d="M380 829l12 0 6 5 8-3 4 3-3 6-10 1-8-3h-9z" fill="#3a3020" shape-rendering="geometricPrecision"/>
<path d="M320 838h6M377 835h12M453 836.5l6-1" stroke="#f0f030" stroke-width="1.2" fill="none"/></g>
<rect x="290.5" y="821.5" width="71" height="32" stroke="#e01818" fill="none"/>
<rect x="317.5" y="817.5" width="122" height="35" stroke="#e01818" fill="none"/>
<rect x="404.5" y="817.5" width="97" height="36" stroke="#e01818" fill="none"/>
<path d="M383 813h8M383 813v8M391 813v8" stroke="#1414d8" stroke-dasharray="3 2" fill="none"/>
<rect x="289.5" y="817.5" width="212" height="36" stroke="#f0f030" stroke-dasharray="10 6" fill="none"/>
<path d="M289.5 817.5V853.5M501.5 817.5V853.5" stroke="#f0f030" fill="none"/>
<rect x="281" y="808" width="7" height="7" fill="#fff"/>
<rect x="393" y="808" width="7" height="7" fill="#fff"/>
<rect x="504" y="808" width="7" height="7" fill="#fff"/>
<rect x="281" y="832" width="7" height="7" fill="#fff"/>
<rect x="504" y="832" width="7" height="7" fill="#fff"/>
<rect x="281" y="857" width="7" height="7" fill="#fff"/>
<rect x="393" y="857" width="7" height="7" fill="#fff"/>
<rect x="504" y="857" width="7" height="7" fill="#fff"/>
<text x="378.7" y="800.8" font-family="Liberation Sans" font-size="13.5" fill="#fff" textLength="32" lengthAdjust="spacingAndGlyphs">407.6</text>
<text x="251.5" y="839.8" font-family="Liberation Sans" font-size="13.5" fill="#fff" textLength="25" lengthAdjust="spacingAndGlyphs">71.8</text>
</svg>
<div class="a" style="left:771px;top:540px;width:17px;height:443px;background:linear-gradient(90deg,#efeee7 0,#f6f5f0 25%,#fdfdfb 70%,#fefefd 100%)"></div><div class="a" style="left:772px;top:540px;width:15px;height:17px;border-radius:3px;border:1px solid #fdfdff;background:linear-gradient(135deg,#cad8fc 0,#bfcffa 50%,#b0c1f2 100%);box-shadow:inset -1px -1px 0 #a3b5e8"><svg width="15" height="17" style="left:-1px;top:-1px" shape-rendering="geometricPrecision"><path d="M3.3 10.7L7.5 6.5l4.2 4.2" fill="none" stroke="#4d6185" stroke-width="2.2"/></svg></div><div class="a" style="left:772px;top:966px;width:15px;height:17px;border-radius:3px;border:1px solid #fdfdff;background:linear-gradient(135deg,#cad8fc 0,#bfcffa 50%,#b0c1f2 100%);box-shadow:inset -1px -1px 0 #a3b5e8"><svg width="15" height="17" style="left:-1px;top:-1px" shape-rendering="geometricPrecision"><path d="M3.3 6.5L7.5 10.7l4.2 -4.2" fill="none" stroke="#4d6185" stroke-width="2.2"/></svg></div><div class="a" style="left:772px;top:767px;width:15px;height:10px;border-radius:2px;border:1px solid #fdfdff;background:linear-gradient(90deg,#c8d6fb,#b9caf6);box-shadow:inset -1px -1px 0 #a3b5e8"></div>
<div class="a" style="left:55px;top:983px;width:716px;height:17px;background:linear-gradient(180deg,#efeee7 0,#f6f5f0 25%,#fdfdfb 70%,#fefefd 100%)"></div><div class="a" style="left:55px;top:984px;width:17px;height:16px;border-radius:3px;border:1px solid #fdfdff;background:linear-gradient(135deg,#cad8fc 0,#bfcffa 50%,#b0c1f2 100%);box-shadow:inset -1px -1px 0 #a3b5e8"><svg width="17" height="16" style="left:-1px;top:-1px" shape-rendering="geometricPrecision"><path d="M10.5 3.8L6.3 8.0l4.2 4.2" fill="none" stroke="#4d6185" stroke-width="2.2"/></svg></div><div class="a" style="left:754px;top:984px;width:17px;height:16px;border-radius:3px;border:1px solid #fdfdff;background:linear-gradient(135deg,#cad8fc 0,#bfcffa 50%,#b0c1f2 100%);box-shadow:inset -1px -1px 0 #a3b5e8"><svg width="17" height="16" style="left:-1px;top:-1px" shape-rendering="geometricPrecision"><path d="M6.5 3.8L10.7 8.0l-4.2 4.2" fill="none" stroke="#4d6185" stroke-width="2.2"/></svg></div><div class="a" style="left:424px;top:984px;width:28px;height:16px;border-radius:2px;border:1px solid #fdfdff;background:linear-gradient(180deg,#c8d6fb,#b9caf6);box-shadow:inset -1px -1px 0 #a3b5e8"><svg width="28" height="16" style="left:-1px;top:-1px" shape-rendering="crispEdges"><path d="M9.5 4v7M11.5 4v7M13.5 4v7M15.5 4v7" stroke="#eef3ff" stroke-width="1"/><path d="M10.5 5v7M12.5 5v7M14.5 5v7M16.5 5v7" stroke="#8ca0d8" stroke-width="1"/></svg></div>
<div class="a" style="left:54px;top:983px;width:1px;height:17px;background:#000"></div>
<div class="a" style="left:771px;top:539px;width:17px;height:1px;background:#000"></div>
<svg style="left:794px;top:539px;background:#000" width="718" height="444" viewBox="794 539 718 444" shape-rendering="crispEdges">
<path d="M801.5 540V983M820.5 540V983M840.5 540V983M860.5 540V983M880.5 540V983M900.5 540V983M920.5 540V983M940.5 540V983M960.5 540V983M980.5 540V983M1000.5 540V983M1019.5 540V983M1039.5 540V983M1059.5 540V983M1079.5 540V983M1099.5 540V983M1119.5 540V983M1139.5 540V983M1159.5 540V983M1179.5 540V983M1199.5 540V983M1219.5 540V983M1238.5 540V983M1258.5 540V983M1278.5 540V983M1298.5 540V983M1318.5 540V983M1338.5 540V983M1358.5 540V983M1378.5 540V983M1398.5 540V983M1418.5 540V983M1437.5 540V983M1457.5 540V983M1477.5 540V983M1497.5 540V983M795 552.5H1512M795 572.5H1512M795 592.5H1512M795 612.5H1512M795 632.5H1512M795 652.5H1512M795 672.5H1512M795 692.5H1512M795 712.5H1512M795 731.5H1512M795 751.5H1512M795 771.5H1512M795 791.5H1512M795 811.5H1512M795 831.5H1512M795 851.5H1512M795 871.5H1512M795 891.5H1512M795 911.5H1512M795 930.5H1512M795 950.5H1512M795 970.5H1512" stroke="#848484" stroke-width="1" fill="none"/>
<path d="M850.5 540V851" stroke="#42c090" stroke-width="1" fill="none"/>
<path d="M860.5 540V861" stroke="#42c090" stroke-width="1" fill="none"/>
<path d="M860.5 861V983" stroke="#1f6464" stroke-width="1" fill="none"/>
<path d="M1417.5 540V861" stroke="#42c090" stroke-width="1" fill="none"/>
<path d="M1427.5 540V851" stroke="#38b0b0" stroke-width="1" fill="none"/>
<path d="M1497.5 540V983" stroke="#6e3c1c" stroke-width="1" fill="none"/>
<path d="M851 771.5H1428" stroke="#42c090" stroke-width="1" fill="none"/>
<path d="M981 771.5H1020" stroke="#2f9a2f" stroke-width="1" fill="none"/>
<path d="M981 781.5H1020" stroke="#2f9a2f" stroke-width="1" fill="none"/>
<path d="M980.5 771V781M1019.5 771V781" stroke="#2f9a2f" stroke-dasharray="3 3" fill="none"/>
<path d="M851 851.5H1428" stroke="#2f8f8f" stroke-width="1" fill="none"/>
<path d="M861 851.5H981" stroke="#2c5fa0" stroke-width="1" fill="none"/>
<path d="M861 861.5H1418" stroke="#2c5fa0" stroke-width="1" fill="none"/>
<path d="M1020 831.5H1258" stroke="#2f8f8f" stroke-width="1" fill="none"/>
<path d="M1020 771.5L1338.5 851.5" stroke="#2f8fa8" stroke-width="1" fill="none" shape-rendering="geometricPrecision" />
<path d="M1020 781.5L1297.5 851.5" stroke="#2f8fa8" stroke-width="1" fill="none" shape-rendering="geometricPrecision" />
<path d="M1257.5 831.5L1338.5 851.5" stroke="#2f8f8f" stroke-width="1" fill="none" shape-rendering="geometricPrecision" />
<path d="M1257.5 831.5L1297.5 851.5" stroke="#2f8f8f" stroke-width="1" fill="none" shape-rendering="geometricPrecision" />
<path d="M1257.5 831V852" stroke="#2f8f8f" stroke-width="1" fill="none"/>
<path d="M1019.5 831V852" stroke="#2f8f8f" stroke-width="1" fill="none"/>
<path d="M980.5 851.5L1020 831.5" stroke="#2f8f8f" stroke-width="1" fill="none" shape-rendering="geometricPrecision" />
<rect x="849" y="770" width="3" height="3" fill="#fff"/>
<rect x="859" y="770" width="3" height="3" fill="#fff"/>
<rect x="979" y="770" width="3" height="3" fill="#fff"/>
<rect x="1018" y="770" width="3" height="3" fill="#fff"/>
<rect x="979" y="780" width="3" height="3" fill="#fff"/>
<rect x="1018" y="780" width="3" height="3" fill="#fff"/>
<rect x="1416" y="770" width="3" height="3" fill="#fff"/>
<rect x="1426" y="770" width="3" height="3" fill="#fff"/>
<rect x="849" y="850" width="3" height="3" fill="#fff"/>
<rect x="859" y="850" width="3" height="3" fill="#fff"/>
<rect x="859" y="860" width="3" height="3" fill="#fff"/>
<rect x="979" y="850" width="3" height="3" fill="#fff"/>
<rect x="1018" y="830" width="3" height="3" fill="#fff"/>
<rect x="1018" y="850" width="3" height="3" fill="#fff"/>
<rect x="1256" y="830" width="3" height="3" fill="#fff"/>
<rect x="1256" y="850" width="3" height="3" fill="#fff"/>
<rect x="1296" y="850" width="3" height="3" fill="#fff"/>
<rect x="1337" y="850" width="3" height="3" fill="#fff"/>
<rect x="1416" y="850" width="3" height="3" fill="#fff"/>
<rect x="1426" y="850" width="3" height="3" fill="#fff"/>
<rect x="1416" y="860" width="3" height="3" fill="#fff"/>
<rect x="1134.5" y="716.5" width="10" height="10" stroke="#b43cb4" fill="none"/>
<rect x="1241.5" y="822.5" width="22" height="29" stroke="#b43cb4" fill="none"/>
<rect x="1367.5" y="822.5" width="21" height="29" stroke="#b43cb4" fill="none"/>
<path d="M1216 851v-4l2-2h30l2-1h16l2 3v4z" fill="#18e8f8" shape-rendering="geometricPrecision"/>
<path d="M1338 851l1-3 5-2h14l3-8 5-4h18l3 2v8l8 3 3 4z" fill="#18e8f8" shape-rendering="geometricPrecision"/>
<path d="M1360 838h24M1362 841h22M1360 844h26" stroke="#000" stroke-width="1"/>
<circle cx="1387.8" cy="802.6" r="3.8" fill="#18e8f8" shape-rendering="geometricPrecision"/><path d="M1385.5 807.5h4.6l1.2 3v14l-1 1.5v19h-4.2v-19l-1.3-2v-13.5z" fill="#18e8f8" shape-rendering="geometricPrecision"/>
<rect x="1367.5" y="822.5" width="21" height="29" stroke="#b43cb4" fill="none"/>
<g opacity="0.88"><path d="M1038 822l10-16 2 8 30-8h50l20 0 6 4c0 8-6 15-16 18l-20 2h-70z" fill="#42555b" shape-rendering="geometricPrecision"/>
<path d="M1052 814h90M1048 820h100M1056 826h80" stroke="#52686c" stroke-width="1.6" shape-rendering="geometricPrecision"/>
<path d="M1158 809l10 2 12-4h28l4 3 16-4v14c-4 6-12 10-22 10h-24c-12-2-20-10-24-21z" fill="#8a7450" shape-rendering="geometricPrecision"/>
<path d="M1170 814h50M1176 822h40" stroke="#a48c62" stroke-width="1.8" shape-rendering="geometricPrecision"/>
<path d="M1180 812l8 1 4 5h-10z" fill="#4a4030" shape-rendering="geometricPrecision"/>
<path d="M1087.5 821.5l12-2.5h15M1185 818.5h6" stroke="#f0f030" stroke-width="1.2" fill="none" shape-rendering="geometricPrecision"/></g>
<rect x="1039.5" y="800.5" width="96" height="40" stroke="#e01818" fill="none"/>
<rect x="1029.5" y="796.5" width="144" height="42" stroke="#e01818" fill="none"/>
<rect x="1139.5" y="796.5" width="102" height="42" stroke="#e01818" fill="none"/>
<path d="M1139 792h6M1145 792v9" stroke="#1414d8" fill="none"/>
<rect x="1029.5" y="796.5" width="212" height="44" stroke="#f0f030" stroke-dasharray="10 6" fill="none"/>
<path d="M1029.5 796.5V840.5M1241.5 796.5V840.5" stroke="#f0f030" fill="none"/>
<rect x="1020" y="787" width="7" height="7" fill="#fff"/>
<rect x="1132" y="787" width="7" height="7" fill="#fff"/>
<rect x="1244" y="787" width="7" height="7" fill="#fff"/>
<rect x="1020" y="815" width="7" height="7" fill="#fff"/>
<rect x="1244" y="815" width="7" height="7" fill="#fff"/>
<rect x="1020" y="843" width="7" height="7" fill="#fff"/>
<rect x="1132" y="843" width="7" height="7" fill="#fff"/>
<rect x="1244" y="843" width="7" height="7" fill="#fff"/>
<text x="1118.8" y="779.6" font-family="Liberation Sans" font-size="13.5" fill="#fff" textLength="32" lengthAdjust="spacingAndGlyphs">341.0</text>
<text x="991" y="822.4" font-family="Liberation Sans" font-size="13.5" fill="#fff" textLength="25" lengthAdjust="spacingAndGlyphs">71.8</text>
</svg>
<div class="a" style="left:1512px;top:540px;width:17px;height:443px;background:linear-gradient(90deg,#efeee7 0,#f6f5f0 25%,#fdfdfb 70%,#fefefd 100%)"></div><div class="a" style="left:1513px;top:540px;width:15px;height:17px;border-radius:3px;border:1px solid #fdfdff;background:linear-gradient(135deg,#cad8fc 0,#bfcffa 50%,#b0c1f2 100%);box-shadow:inset -1px -1px 0 #a3b5e8"><svg width="15" height="17" style="left:-1px;top:-1px" shape-rendering="geometricPrecision"><path d="M3.3 10.7L7.5 6.5l4.2 4.2" fill="none" stroke="#4d6185" stroke-width="2.2"/></svg></div><div class="a" style="left:1513px;top:966px;width:15px;height:17px;border-radius:3px;border:1px solid #fdfdff;background:linear-gradient(135deg,#cad8fc 0,#bfcffa 50%,#b0c1f2 100%);box-shadow:inset -1px -1px 0 #a3b5e8"><svg width="15" height="17" style="left:-1px;top:-1px" shape-rendering="geometricPrecision"><path d="M3.3 6.5L7.5 10.7l4.2 -4.2" fill="none" stroke="#4d6185" stroke-width="2.2"/></svg></div><div class="a" style="left:1513px;top:767px;width:15px;height:10px;border-radius:2px;border:1px solid #fdfdff;background:linear-gradient(90deg,#c8d6fb,#b9caf6);box-shadow:inset -1px -1px 0 #a3b5e8"></div>
<div class="a" style="left:795px;top:983px;width:717px;height:17px;background:linear-gradient(180deg,#efeee7 0,#f6f5f0 25%,#fdfdfb 70%,#fefefd 100%)"></div><div class="a" style="left:795px;top:984px;width:17px;height:16px;border-radius:3px;border:1px solid #fdfdff;background:linear-gradient(135deg,#cad8fc 0,#bfcffa 50%,#b0c1f2 100%);box-shadow:inset -1px -1px 0 #a3b5e8"><svg width="17" height="16" style="left:-1px;top:-1px" shape-rendering="geometricPrecision"><path d="M10.5 3.8L6.3 8.0l4.2 4.2" fill="none" stroke="#4d6185" stroke-width="2.2"/></svg></div><div class="a" style="left:1495px;top:984px;width:17px;height:16px;border-radius:3px;border:1px solid #fdfdff;background:linear-gradient(135deg,#cad8fc 0,#bfcffa 50%,#b0c1f2 100%);box-shadow:inset -1px -1px 0 #a3b5e8"><svg width="17" height="16" style="left:-1px;top:-1px" shape-rendering="geometricPrecision"><path d="M6.5 3.8L10.7 8.0l-4.2 4.2" fill="none" stroke="#4d6185" stroke-width="2.2"/></svg></div><div class="a" style="left:1163px;top:984px;width:24px;height:16px;border-radius:2px;border:1px solid #fdfdff;background:linear-gradient(180deg,#c8d6fb,#b9caf6);box-shadow:inset -1px -1px 0 #a3b5e8"><svg width="24" height="16" style="left:-1px;top:-1px" shape-rendering="crispEdges"><path d="M7.5 4v7M9.5 4v7M11.5 4v7M13.5 4v7" stroke="#eef3ff" stroke-width="1"/><path d="M8.5 5v7M10.5 5v7M12.5 5v7M14.5 5v7" stroke="#8ca0d8" stroke-width="1"/></svg></div>
<div class="a" style="left:794px;top:983px;width:1px;height:17px;background:#000"></div>
<div class="a" style="left:1512px;top:539px;width:17px;height:1px;background:#000"></div>
<svg style="left:0;top:47px" width="920" height="30" viewBox="0 47 920 30">
<path d="M101.5 53V72" stroke="#aca899" shape-rendering="crispEdges"/><path d="M102.5 53V72" stroke="#fff" shape-rendering="crispEdges"/>
<path d="M252.5 53V72" stroke="#aca899" shape-rendering="crispEdges"/><path d="M253.5 53V72" stroke="#fff" shape-rendering="crispEdges"/>
<path d="M329.5 53V72" stroke="#aca899" shape-rendering="crispEdges"/><path d="M330.5 53V72" stroke="#fff" shape-rendering="crispEdges"/>
<path d="M384.5 53V72" stroke="#aca899" shape-rendering="crispEdges"/><path d="M385.5 53V72" stroke="#fff" shape-rendering="crispEdges"/>
<path d="M461.5 53V72" stroke="#aca899" shape-rendering="crispEdges"/><path d="M462.5 53V72" stroke="#fff" shape-rendering="crispEdges"/>
<path d="M514.5 53V72" stroke="#aca899" shape-rendering="crispEdges"/><path d="M515.5 53V72" stroke="#fff" shape-rendering="crispEdges"/>
<path d="M637.5 53V72" stroke="#aca899" shape-rendering="crispEdges"/><path d="M638.5 53V72" stroke="#fff" shape-rendering="crispEdges"/>
<path d="M737.5 53V72" stroke="#aca899" shape-rendering="crispEdges"/><path d="M738.5 53V72" stroke="#fff" shape-rendering="crispEdges"/>
<path d="M158.5 49V75" stroke="#c5c2b2" shape-rendering="crispEdges"/><path d="M159.5 49V75" stroke="#fff" shape-rendering="crispEdges"/>
<path d="M218.5 49V75" stroke="#c5c2b2" shape-rendering="crispEdges"/><path d="M219.5 49V75" stroke="#fff" shape-rendering="crispEdges"/>
<path d="M909.5 49V75" stroke="#c5c2b2" shape-rendering="crispEdges"/><path d="M910.5 49V75" stroke="#fff" shape-rendering="crispEdges"/>
<rect x="6" y="51" width="22" height="22" fill="#f7f6f1"/><path d="M6.5 73V51.5H28" stroke="#b4b2a4" fill="none" shape-rendering="crispEdges"/><path d="M27.5 52V72.5H7" stroke="#fff" fill="none" shape-rendering="crispEdges"/>
<path d="M15.5 57V69M22.5 57V69M13 59.5H25M13 66.5H25" stroke="#000" stroke-width="1" shape-rendering="crispEdges"/><path d="M11 59.5h1M26 59.5h1M11 66.5h1M26 66.5h1M15.5 55v1M22.5 55v1M15.5 70v1M22.5 70v1" stroke="#000" shape-rendering="crispEdges"/>
<text x="31.5" y="59.6" font-family="Liberation Sans" font-weight="bold" font-size="7.6" fill="#000" textLength="12" lengthAdjust="spacingAndGlyphs">3D</text><path d="M39.5 60V69M43.5 60V69M36 62.5H47M36 66.5H47" stroke="#000" shape-rendering="crispEdges"/>
<path d="M56.5 58V70M60.5 58V70M64.5 58V70M55 61.5H67M55 64.5H67M55 67.5H67" stroke="#000" shape-rendering="crispEdges"/><rect x="66" y="56" width="5.5" height="2" fill="#20d8e8"/>
<path d="M80.5 58V70M84.5 58V70M87.5 58V70M78 61.5H90M78 64.5H90M78 67.5H90" stroke="#000" shape-rendering="crispEdges"/><path d="M88 56.7h6.5M91.2 53.8v6" stroke="#20d8e8" stroke-width="2"/>
<text x="109" y="72" font-family="Liberation Sans" font-size="9" fill="#000">L</text><g fill="#fff" stroke="#1a1ac0" stroke-width="1.4"><rect x="113" y="55" width="8" height="5"/><rect x="115" y="59" width="8" height="5"/><rect x="117" y="64" width="8" height="5"/></g>
<text x="132" y="72" font-family="Liberation Sans" font-size="9" fill="#000">S</text><g fill="#fff" stroke="#1a1ac0" stroke-width="1.4"><rect x="136" y="55" width="8" height="5"/><rect x="138" y="59" width="8" height="5"/><rect x="140" y="64" width="8" height="5"/></g>
<path d="M175.5 60.8C178 57.4 183.4 58 183.2 61.8C183.1 63.6 182 65 180.2 65.6" stroke="#1a1ac0" stroke-width="1.7" fill="none"/><path d="M171.3 57.8l6.4 1.2-4.6 4.6z" fill="#1a1ac0"/>
<path d="M202.5 60.8C200 57.4 194.6 58 194.8 61.8C194.9 63.6 196 65 197.8 65.6" stroke="#b8b5a6" stroke-width="1.7" fill="none"/><path d="M206.7 57.8l-6.4 1.2 4.6 4.6z" fill="#b8b5a6"/>
<path d="M232 60l4-4h8v8l-4 4h-8z" fill="#1a1ac0"/><path d="M232 60h8v8M240 60l4-4" stroke="#000" stroke-width="1" fill="none"/><rect x="238" y="64" width="6" height="3" fill="#20d8e8"/>
<rect x="260.5" y="54.5" width="15" height="15" fill="none" stroke="#0a8a0a" stroke-dasharray="2 1.5"/><path d="M263 60l2-2h5v5l-2 2h-5z" fill="#1a1ac0" stroke="#000" stroke-width="0.8"/><path d="M267 64l2-2h5v5l-2 2h-5z" fill="#2a3ad8" stroke="#000" stroke-width="0.8"/>
<path d="M284 58l2-2h5v5l-2 2h-5z" fill="#1a1ac0" stroke="#000" stroke-width="0.8"/><path d="M290 65l2-2h5v5l-2 2h-5z" fill="#2a3ad8" stroke="#000" stroke-width="0.8"/><path d="M293 57l3 3M286 66l3 3" stroke="#0a8a0a" stroke-width="1.3"/>
<text x="310" y="65.5" font-family="Liberation Sans" font-size="11.5" fill="#000">ig</text>
<path d="M339.5 60l3-4h10v9l-3 4h-10zM339.5 60h10v9M349.5 60l3-4" stroke="#d81818" stroke-width="1.3" stroke-dasharray="2.2 1.6" fill="none"/>
<path d="M362.5 60l3-4h10v9l-3 4h-10zM362.5 60h10v9M372.5 60l3-4" stroke="#000" stroke-width="1.3" stroke-dasharray="2.2 1.6" fill="none"/>
<path d="M396.5 54.5l5 9.5M403 54.5l-5 9.5" stroke="#000" stroke-width="1.4"/><ellipse cx="397.3" cy="66.3" rx="1.7" ry="2.3" fill="none" stroke="#1a1ac0" stroke-width="1.3"/><ellipse cx="402.2" cy="66.3" rx="1.7" ry="2.3" fill="none" stroke="#1a1ac0" stroke-width="1.3"/>
<g fill="#fff" stroke="#000" shape-rendering="crispEdges"><path d="M416.5 55.5h6l2 2v8h-8z"/><path d="M421.5 59.5h6l2 2v8h-8z"/></g><path d="M423 63.5h5M423 65.5h5M423 67.5h5" stroke="#1a1ac0" shape-rendering="crispEdges"/>
<path d="M439.5 57.5h10v12h-10z" fill="#c9c6b8" stroke="#aca899" shape-rendering="crispEdges"/><rect x="442" y="55" width="5" height="3" fill="#aca899"/><path d="M445.5 62.5h7v8h-7z" fill="#f3f2ec" stroke="#aca899" shape-rendering="crispEdges"/>
<rect x="468" y="58" width="16" height="10" fill="#f0e020"/><path d="M468 68l4-10M472 68l4-10M476 68l4-10M480 68l4-10" stroke="#000" stroke-width="2"/>
<rect x="491" y="57" width="16" height="11" fill="#f0e020"/><path d="M495 68l3-11M501 68l3-11" stroke="#000" stroke-width="2"/><path d="M491 57h3v3h-3zM504 57h3v3h-3zM491 65h3v3h-3zM504 65h3v3h-3zM497 61h4v3h-4z" fill="#d81818"/>
<rect x="523.5" y="56.5" width="13" height="12" fill="none" stroke="#000" stroke-width="1.4"/><path d="M526 59l8 7M534 59l-8 7" stroke="#b8b5a6"/><g fill="#000"><rect x="522" y="55" width="3" height="3"/><rect x="535" y="55" width="3" height="3"/><rect x="522" y="67" width="3" height="3"/><rect x="535" y="67" width="3" height="3"/></g>
<rect x="546.5" y="55.5" width="10" height="10" fill="none" stroke="#20d8e8" stroke-width="1.3" stroke-dasharray="2 1.5"/><path d="M555 63v7l2-2 2 3" stroke="#000" stroke-width="1.2" fill="none"/>
<rect x="565" y="51" width="22" height="22" fill="#f7f6f1"/><path d="M565.5 73V51.5H587" stroke="#b4b2a4" fill="none" shape-rendering="crispEdges"/><path d="M586.5 52V72.5H566" stroke="#fff" fill="none" shape-rendering="crispEdges"/>
<text x="573" y="67" font-family="Liberation Sans" font-size="12" fill="#000">tl</text>
<text x="595" y="67" font-family="Liberation Sans" font-size="11" fill="#000">tl</text><path d="M591 62.5h4M593 60.5l-2 2 2 2M603 62.5h4M605 60.5l2 2-2 2" stroke="#000" stroke-width="1" fill="none"/>
<path d="M615 58l4-3v12l-4 3z" fill="#9a9a9a" stroke="#000" stroke-width="0.8"/><path d="M625 58l4-3v12z" fill="#d81818"/><path d="M625 58v12l4-3z" fill="#18a018"/>
<rect x="642" y="51" width="22" height="22" fill="#f7f6f1"/><path d="M642.5 73V51.5H664" stroke="#b4b2a4" fill="none" shape-rendering="crispEdges"/><path d="M663.5 52V72.5H643" stroke="#fff" fill="none" shape-rendering="crispEdges"/>
<rect x="646.2" y="55.5" width="5.5" height="9" fill="none" stroke="#1414c0" stroke-width="2.4"/><path d="M653.2 59.2h4.2l2 2v6l-2 2h-4.2z" fill="none" stroke="#d81818" stroke-width="2.4"/>
<rect x="665" y="51" width="22" height="22" fill="#f7f6f1"/><path d="M665.5 73V51.5H687" stroke="#b4b2a4" fill="none" shape-rendering="crispEdges"/><path d="M686.5 52V72.5H666" stroke="#fff" fill="none" shape-rendering="crispEdges"/>
<text x="668" y="60" font-family="Liberation Sans" font-size="7" fill="#000">3D</text><path d="M670 70l6-10 3 2 4 8M676 60l-1-3" stroke="#000" stroke-width="1.5" fill="none"/>
<rect x="692.2" y="55.5" width="5.5" height="9" fill="none" stroke="#1414c0" stroke-width="2.4"/><path d="M698 58l2 11 2.5-7 2.5 7 2-11" fill="none" stroke="#d81818" stroke-width="2.4"/>
<rect x="715.2" y="55.5" width="5.5" height="9" fill="none" stroke="#1414c0" stroke-width="2.4"/><path d="M722.2 69.5v-10.3h4.5l1.5 1.5v2.5l-1.5 1.5h-4.5M726 64.5l3 5" fill="none" stroke="#d81818" stroke-width="2.4"/>
<path d="M748 64c2-4 5-4 6-1s4 3 6-1M749 68c3-2 6 1 9-2" stroke="#000" stroke-width="1" fill="none"/>
<rect x="765" y="51" width="22" height="22" fill="#f7f6f1"/><path d="M765.5 73V51.5H787" stroke="#b4b2a4" fill="none" shape-rendering="crispEdges"/><path d="M786.5 52V72.5H766" stroke="#fff" fill="none" shape-rendering="crispEdges"/>
<path d="M776 56l6 4v6l-6 4-6-4v-6z" fill="none" stroke="#000" stroke-width="1.3"/><path d="M770 60l6 3 6-3M776 63v7M772 66l4-10 4 10" stroke="#000" stroke-width="0.9" fill="none"/>
<rect x="788" y="51" width="22" height="22" fill="#f7f6f1"/><path d="M788.5 73V51.5H810" stroke="#b4b2a4" fill="none" shape-rendering="crispEdges"/><path d="M809.5 52V72.5H789" stroke="#fff" fill="none" shape-rendering="crispEdges"/>
<rect x="792.5" y="56.5" width="13" height="12" fill="none" stroke="#000" stroke-width="1.3"/><path d="M794 67l2-9 2 9 2-9 2 9 2-9" stroke="#000" stroke-width="1.2" fill="none"/>
<rect x="814" y="62" width="8" height="8" fill="#1a1ad8"/><rect x="819" y="58" width="7" height="7" fill="#3a4ae8"/><rect x="824" y="55" width="6" height="6" fill="#b0b4d0"/>
<text x="836" y="67" font-family="Liberation Sans" font-size="10" fill="#000">CM</text>
<rect x="857" y="51" width="22" height="22" fill="#f7f6f1"/><path d="M857.5 73V51.5H879" stroke="#b4b2a4" fill="none" shape-rendering="crispEdges"/><path d="M878.5 52V72.5H858" stroke="#fff" fill="none" shape-rendering="crispEdges"/>
<path d="M862 68c-1-7 4-12 13-12c0 8-4 13-12 12z" fill="#18c018" stroke="#000" stroke-width="1"/><path d="M860 71l8-8" stroke="#000" stroke-width="1.2"/>
<rect x="880" y="51" width="22" height="22" fill="#f7f6f1"/><path d="M880.5 73V51.5H902" stroke="#b4b2a4" fill="none" shape-rendering="crispEdges"/><path d="M901.5 52V72.5H881" stroke="#fff" fill="none" shape-rendering="crispEdges"/>
<text x="885" y="61" font-family="Liberation Sans" font-weight="bold" font-size="7.5" fill="#c01818">no</text><text x="882" y="69" font-family="Liberation Sans" font-weight="bold" font-size="7.5" fill="#c01818">draw</text>
</svg>
<svg style="left:0;top:77px" width="54" height="926" viewBox="0 77 54 926">
<defs>
<linearGradient id="brk" x1="0" y1="0" x2="1" y2="1"><stop offset="0" stop-color="#c8694a"/><stop offset="1" stop-color="#9a4a32"/></linearGradient>
<linearGradient id="brk2" x1="0" y1="0" x2="0" y2="1"><stop offset="0" stop-color="#d0785a"/><stop offset="1" stop-color="#b05a40"/></linearGradient>
<radialGradient id="redb" cx="0.4" cy="0.35" r="0.7"><stop offset="0" stop-color="#ff5a5a"/><stop offset="0.6" stop-color="#e81010"/><stop offset="1" stop-color="#980808"/></radialGradient>
<linearGradient id="wht" x1="0" y1="0" x2="1" y2="1"><stop offset="0" stop-color="#f4f4f4"/><stop offset="1" stop-color="#a8a8a8"/></linearGradient>
</defs>
<rect x="7" y="97" width="40" height="32" fill="#bebebe"/>
<rect x="6" y="135" width="40" height="32" fill="#bebebe"/>
<rect x="6" y="174" width="40" height="32" fill="#bebebe"/>
<rect x="6" y="219" width="40" height="32" fill="#bebebe"/>
<rect x="6" y="258" width="40" height="32" fill="#bebebe"/>
<rect x="6" y="303" width="40" height="32" fill="#bebebe"/>
<rect x="6" y="342" width="40" height="32" fill="#bebebe"/>
<rect x="6" y="381" width="40" height="32" fill="#bebebe"/>
<rect x="6" y="420" width="40" height="32" fill="#bebebe"/>
<rect x="6" y="465" width="40" height="32" fill="#bebebe"/>
<rect x="6" y="504" width="40" height="32" fill="#bebebe"/>
<path d="M4 212.5H48" stroke="#aca899" shape-rendering="crispEdges"/><path d="M4 213.5H48" stroke="#fff" shape-rendering="crispEdges"/>
<path d="M4 296.5H48" stroke="#aca899" shape-rendering="crispEdges"/><path d="M4 297.5H48" stroke="#fff" shape-rendering="crispEdges"/>
<path d="M4 458.5H48" stroke="#aca899" shape-rendering="crispEdges"/><path d="M4 459.5H48" stroke="#fff" shape-rendering="crispEdges"/>
<path d="M4 546.5H48" stroke="#aca899" shape-rendering="crispEdges"/><path d="M4 547.5H48" stroke="#fff" shape-rendering="crispEdges"/>
<rect x="3.5" y="93.5" width="45" height="38" fill="none" stroke="#fff"/><path d="M3.5 131.5V93.5H48.5" fill="none" stroke="#8a887a"/><rect x="5" y="95" width="43" height="35.5" fill="none" stroke="#fbfaf4" stroke-width="2" stroke-dasharray="1.2 1"/>
<path d="M19.2 123.6l13-6.2-1-2.2 10.3-1-6.6 6.2-1-2-13.6 6.6z" fill="#4a4a4a"/><path d="M15 120.3l9.4-13.8-2.6-1.8 10-5.2-2.3 10.6-2.5-1.7-9.6 14.2z" fill="#e81010"/><path d="M16.5 120l9.5-14" stroke="#ff6a6a" stroke-width="0.8"/>
<ellipse cx="33.5" cy="154.5" rx="8.5" ry="4" fill="#4a4a4a"/><path d="M16 161l8-5 4-2-1-2z" fill="#4a4a4a"/><path d="M12.3 158.5l8.2-9.5 3.8 3.4-8.6 9.4z" fill="#d40c0c"/><ellipse cx="25.8" cy="145" rx="9" ry="8.6" fill="url(#redb)"/><ellipse cx="25.5" cy="144.5" rx="6" ry="5.6" fill="none" stroke="#b00808" stroke-width="0.8"/>
<path d="M27 202l16-6 2-8-9-2z" fill="#4a4a4a"/><path d="M10.5 179l5-3 14 1.5 8.5 5-1.5 14-9 5.5-10-4.5-5-4z" fill="#d00c0c"/><path d="M10.5 179l5-3 14 1.5 8.5 5-10 2.5-4-3.5-5 2z" fill="#f02020"/><path d="M12 186c3-3 8-2 9 2l1 9-5 1c-4-1-6-6-5-12z" fill="#b00808"/><path d="M24 182l4 3.5-.5 16M32 185l-1 12" stroke="#8a0606" stroke-width="1.2" fill="none"/>
<ellipse cx="36" cy="241" rx="7" ry="5.5" fill="#4a4a4a" opacity="0.8"/><path d="M19.5 234h9.5v13l-2 1.5h-5.5l-2-1.5z" fill="url(#wht)"/><path d="M20 238h9M20 242h9" stroke="#a0a0a0" stroke-width="0.8"/><ellipse cx="22.8" cy="227.5" rx="8" ry="7.8" fill="#eeeedd"/><ellipse cx="21.5" cy="226.5" rx="5" ry="5" fill="#fffff0"/><rect x="29" y="224" width="3" height="7" fill="#c8c8c8"/>
<path d="M27 288l18-8-2-7-11 3z" fill="#4a4a4a"/><path d="M10.2 265.5l13.8-5.6 12 5.4-12.6 4.8z" fill="#f2f2f2"/><path d="M10.2 265.5l13.2 4.6v17.4l-12-6.6z" fill="#c8c8c8"/><path d="M23.4 270.1l12.6-4.8-1.2 11-11.4 11.2z" fill="#a4a4a4"/>
<path d="M30 333l14-8-3-6-11 5z" fill="#4a4a4a"/><path d="M9 311l14 6v16l-13-7z" fill="#2a78c8"/><path d="M23 317l14-7-1 16-13 7z" fill="#48a838"/><path d="M9 311l14-6 14 5-14 7z" fill="url(#brk2)"/><path d="M23 322l13.6-7M23 327l13.3-7" stroke="#2a7020" stroke-width="1.2" fill="none"/><path d="M12 316v2M16 318v2M20 320v2M12 322v2M16 324v2M20 326v2" stroke="#103860" stroke-width="1.6"/>
<path d="M30 372l14-8-3-6-11 5z" fill="#4a4a4a"/><path d="M9 350l14 6v16l-13-7z" fill="#b8583e"/><path d="M23 356l14-7-1 16-13 7z" fill="#8e4430"/><path d="M9 350l14-6 14 5-14 7z" fill="url(#brk2)"/><path d="M9.5 355l13.5 6M9.7 360l13.3 6M23 361l13.6-7M23 366l13.3-7" stroke="#7a3a28" stroke-width="0.8" fill="none"/>
<path d="M30 411l14-8-3-6-11 5z" fill="#4a4a4a"/><path d="M9 389l14 6v16l-13-7z" fill="#b8583e"/><path d="M23 395l14-7-1 16-13 7z" fill="#8e4430"/><path d="M9 389l14-6 14 5-14 7z" fill="url(#brk2)"/><path d="M9.5 394l13.5 6M9.7 399l13.3 6M23 400l13.6-7M23 405l13.3-7" stroke="#7a3a28" stroke-width="0.8" fill="none"/>
<g transform="translate(30 400) skewY(-27)"><circle r="6.5" fill="none" stroke="#f01010" stroke-width="1.8"/><circle r="3" fill="none" stroke="#f01010" stroke-width="1.6"/></g>
<path d="M30 450l14-8-3-6-11 5z" fill="#4a4a4a"/><path d="M9 428l14 6v16l-13-7z" fill="#b8583e"/><path d="M23 434l14-7-1 16-13 7z" fill="#8e4430"/><path d="M9 428l14-6 14 5-14 7z" fill="#b8583e"/><path d="M9.5 433l13.5 6M9.7 438l13.3 6M23 439l13.6-7M23 444l13.3-7" stroke="#7a3a28" stroke-width="0.8" fill="none"/>
<path d="M13 428l10-4 10 3.5-10 5z" fill="#3a8a28"/>
<path d="M30 495l14-8-3-6-11 5z" fill="#4a4a4a"/><path d="M9 473l8 20 13 2-7-16z" fill="#b8583e"/><path d="M9 473l8-4 16 1 5 15-8 10-7-16z" fill="#f0d878"/><path d="M30 495l8-10 1 4-6 7z" fill="#8e4430"/>
<path d="M9 507l14-2 14 4-14 6zM9 507l4 20 10 6 13-8 1-16M23 515v18M13 527l10-12M23 522l13 3" stroke="#808880" stroke-width="1.1" fill="none"/>
<rect x="7.5" y="505.5" width="3.2" height="3.2" fill="#d01010"/>
<rect x="21.5" y="503.5" width="3.2" height="3.2" fill="#d01010"/>
<rect x="35.5" y="507.5" width="3.2" height="3.2" fill="#d01010"/>
<rect x="21.5" y="513.5" width="3.2" height="3.2" fill="#d01010"/>
<rect x="11.5" y="525.5" width="3.2" height="3.2" fill="#d01010"/>
<rect x="21.5" y="531.5" width="3.2" height="3.2" fill="#d01010"/>
<rect x="34.5" y="523.5" width="3.2" height="3.2" fill="#d01010"/>
<rect x="19.5" y="516.5" width="3.2" height="3.2" fill="#d01010"/>
</svg>
<div class="a" style="left:1530px;top:76px;width:150px;height:925px;background:#ece9d8;border-top:1px solid #aca899;border-left:1px solid #fff"></div>
<div class="a" style="left:1531px;top:77px;width:149px;height:1px;background:#fff"></div>
<div class="t" style="left:1540px;top:89px;font-size:11px;letter-spacing:-0.25px;color:#000">Select:</div>
<div class="a" style="left:1540px;top:104px;width:132px;height:16px;border:1px solid;border-color:#716f64 #fff #fff #716f64;box-shadow:inset 1px 1px 0 #404040;background:#f5f4ee;text-align:center;line-height:15px;font-size:11px;padding-left:2px">Groups</div>
<div class="btn" style="left:1540px;top:128px;width:132px;height:16px;line-height:14px;font-size:11px">Objects</div>
<div class="btn" style="left:1540px;top:151px;width:132px;height:16px;line-height:14px;font-size:11px">Solids</div>
<div class="a" style="left:1531px;top:176px;width:149px;height:1px;background:#aca899"></div><div class="a" style="left:1531px;top:177px;width:149px;height:1px;background:#fff"></div>
<div class="t" style="left:1535px;top:181px;font-size:11px;letter-spacing:-0.25px;color:#000">Texture group:</div>
<div class="a" style="left:1540px;top:195px;width:136px;height:19px;background:#fff;border:1px solid;border-color:#716f64 #fff #fff #716f64;box-shadow:inset 1px 1px 0 #404040"></div><div class="btn" style="left:1658px;top:197px;width:16px;height:15px;box-shadow:1px 1px 0 #404040,inset -1px -1px 0 #aca899"><svg width="16" height="15" style="left:-1px;top:-1px"><path d="M4.5 5.5h7l-3.5 4z" fill="#000"/></svg></div><div class="t" style="left:1544px;top:200px;font-size:11px">All Textures</div>
<div class="t" style="left:1535px;top:218px;font-size:11px;letter-spacing:-0.25px;color:#000">Current texture:</div>
<div class="a" style="left:1540px;top:233px;width:136px;height:20px;background:#fff;border:1px solid;border-color:#716f64 #fff #fff #716f64;box-shadow:inset 1px 1px 0 #404040"></div><div class="btn" style="left:1658px;top:235px;width:16px;height:16px;box-shadow:1px 1px 0 #404040,inset -1px -1px 0 #aca899"><svg width="16" height="16" style="left:-1px;top:-1px"><path d="M4.5 6.0h7l-3.5 4z" fill="#000"/></svg></div><div class="t" style="left:1544px;top:238px;font-size:11px">&nbsp;/rain</div>
<div class="a" style="left:1540px;top:259px;width:74px;height:80px;background:#808080"></div>
<div class="t" style="left:1619px;top:262px;font-size:11px;letter-spacing:-0.25px;color:#000">32x32</div>
<div class="btn" style="left:1618px;top:288px;width:59px;height:22px;line-height:20px;font-size:11px"><u>B</u>rowse...</div>
<div class="btn" style="left:1618px;top:317px;width:59px;height:22px;line-height:20px;font-size:11px"><u>R</u>eplace...</div>
<div class="a" style="left:1531px;top:346px;width:149px;height:1px;background:#aca899"></div><div class="a" style="left:1531px;top:347px;width:149px;height:1px;background:#fff"></div>
<div class="t" style="left:1535px;top:350px;font-size:11px;letter-spacing:-0.25px;color:#000">VisGroups:</div>
<div class="a" style="left:1535px;top:384px;width:142px;height:161px;border:1px solid;border-color:#fff #716f64 #716f64 #fff;box-shadow:1px 1px 0 #404040"></div>
<div class="a" style="left:1535px;top:365px;width:45px;height:20px;background:#ece9d8;border:1px solid;border-color:#fff #716f64 #ece9d8 #fff;box-shadow:1px 0 0 #404040;border-radius:2px 2px 0 0"></div>
<div class="a" style="left:1581px;top:367px;width:39px;height:17px;background:#ece9d8;border:1px solid;border-color:#fff #716f64 transparent #fff;box-shadow:1px 0 0 #404040;border-radius:2px 2px 0 0"></div>
<div class="t" style="left:1542px;top:369px;font-size:11px;letter-spacing:-0.25px;color:#000">User</div>
<div class="t" style="left:1584px;top:371px;font-size:11px;letter-spacing:-0.25px;color:#000">Auto</div>
<div class="a" style="left:1537px;top:388px;width:136px;height:152px;background:#fff;border:1px solid;border-color:#716f64 #fff #fff #716f64;box-shadow:inset 1px 1px 0 #404040"></div>
<div class="btn" style="left:1532px;top:548px;width:34px;height:18px;line-height:16px;font-size:11px"><u>S</u>how</div>
<div class="btn" style="left:1569px;top:548px;width:34px;height:18px;line-height:16px;font-size:11px"><u>E</u>dit</div>
<div class="btn" style="left:1606px;top:548px;width:35px;height:18px;line-height:16px;font-size:11px"><u>M</u>ark</div>
<div class="btn" style="left:1645px;top:548px;width:16px;height:18px;line-height:16px;font-size:11px"></div>
<div class="btn" style="left:1663px;top:548px;width:16px;height:18px;line-height:16px;font-size:11px"></div>
<svg style="left:1645px;top:548px" width="36" height="18"><path d="M8.5 4l4.5 5h-3v5h-3v-5h-3z" fill="#000"/><path d="M26.5 14l4.5-5h-3v-5h-3v5h-3z" fill="#000"/></svg>
<div class="a" style="left:1531px;top:571px;width:149px;height:1px;background:#aca899"></div><div class="a" style="left:1531px;top:572px;width:149px;height:1px;background:#fff"></div>
<div class="t" style="left:1535px;top:578px;font-size:11px;letter-spacing:-0.25px;color:#000">Move</div>
<div class="t" style="left:1535px;top:591px;font-size:11px;letter-spacing:-0.25px;color:#000">selected:</div>
<div class="btn" style="left:1580px;top:578px;width:47px;height:22px;line-height:20px;font-size:11px">to<u>W</u>orld</div>
<div class="btn" style="left:1630px;top:578px;width:47px;height:22px;line-height:20px;font-size:11px">to<u>E</u>ntity</div>
<div class="t" style="left:1535px;top:608px;font-size:11px;letter-spacing:-0.25px;color:#000"><u>C</u>ategories:</div>
<div class="a" style="left:1535px;top:623px;width:141px;height:19px;background:#ece9d8;border:1px solid;border-color:#716f64 #fff #fff #716f64;box-shadow:inset 1px 1px 0 #404040"></div><div class="btn" style="left:1658px;top:625px;width:16px;height:15px;box-shadow:1px 1px 0 #404040,inset -1px -1px 0 #aca899"><svg width="16" height="15" style="left:-1px;top:-1px"><path d="M4.5 5.5h7l-3.5 4z" fill="#aca899"/></svg></div>
<div class="t" style="left:1535px;top:647px;font-size:11px;letter-spacing:-0.25px;color:#000"><u>O</u>bjects:</div>
<div class="a" style="left:1535px;top:662px;width:141px;height:21px;background:#ece9d8;border:1px solid;border-color:#716f64 #fff #fff #716f64;box-shadow:inset 1px 1px 0 #404040"></div><div class="btn" style="left:1658px;top:664px;width:16px;height:17px;box-shadow:1px 1px 0 #404040,inset -1px -1px 0 #aca899"><svg width="16" height="17" style="left:-1px;top:-1px"><path d="M4.5 6.5h7l-3.5 4z" fill="#aca899"/></svg></div>
<div class="a" style="left:1574px;top:688px;width:35px;height:22px;background:#ece9d8;border:1px solid;border-color:#716f64 #fff #fff #716f64;box-shadow:inset 1px 1px 0 #404040"></div>
<div class="t" style="left:1578px;top:693px;font-size:11px;letter-spacing:-0.25px;color:#aca899">0</div>
<div class="btn" style="left:1609px;top:688px;width:16px;height:11px"></div><div class="btn" style="left:1609px;top:699px;width:16px;height:11px"></div>
<svg style="left:1609px;top:688px" width="16" height="22"><path d="M5.5 7h5l-2.5-3z" fill="#aca899"/><path d="M5.5 15h5l-2.5 3z" fill="#aca899"/></svg>
<div class="btn" style="left:1552px;top:713px;width:107px;height:22px;line-height:20px;font-size:11px"><u>C</u>reate Prefab</div>
<div class="a" style="left:1531px;top:738px;width:149px;height:1px;background:#aca899"></div><div class="a" style="left:1531px;top:739px;width:149px;height:1px;background:#fff"></div>
<svg style="left:0;top:1019px" width="330" height="60" viewBox="0 1019 330 60">
<defs>
<linearGradient id="fb" gradientUnits="userSpaceOnUse" x1="0" y1="1025" x2="0" y2="1045"><stop offset="0" stop-color="#8cc4f4"/><stop offset="0.5" stop-color="#4a8ed0"/><stop offset="1" stop-color="#1f4f8c"/></linearGradient>
<linearGradient id="fy" gradientUnits="userSpaceOnUse" x1="0" y1="1025" x2="0" y2="1045"><stop offset="0" stop-color="#ffe828"/><stop offset="0.5" stop-color="#d8b414"/><stop offset="1" stop-color="#7a6006"/></linearGradient>
<radialGradient id="ico" cx="0.5" cy="0.45" r="0.75"><stop offset="0" stop-color="#c87812"/><stop offset="0.6" stop-color="#a85a08"/><stop offset="1" stop-color="#6a3404"/></radialGradient>
</defs>
<rect x="5.5" y="1024" width="49.5" height="49" fill="url(#ico)"/>
<path d="M21 1030h18l10 10v17l-10 10h-18l-10-10v-17z" fill="none" stroke="#7a4206" stroke-width="2.2"/><path d="M22 1033h16l8 8v14l-8 8h-16l-8-8v-14z" fill="none" stroke="#d08a20" stroke-width="1" opacity="0.7"/>
<path d="M16 1045c6-6 20-7 28-2c-3 5-9 6-14 5l-6 6c-3-3-6-5-8-9z" fill="#8a4c08" stroke="#d8962a" stroke-width="0.8"/><rect x="25" y="1058" width="7" height="6" fill="#5a2c04"/>
<path d="M86.69999999999999 1027.4H65.3Q63.3 1027.4 63.3 1029.4V1044.5M63.3 1035H83.69999999999999" fill="none" stroke="url(#fb)" stroke-width="3.8" stroke-linejoin="round" stroke-linecap="butt"/>
<path d="M91.5 1044.5V1027.4H109.3Q112.3 1027.4 112.3 1030.4V1033.5Q112.3 1036 109.3 1036H91.5" fill="none" stroke="url(#fb)" stroke-width="3.8" stroke-linejoin="round" stroke-linecap="butt"/>
<path d="M142 1027.4H122Q119 1027.4 119 1030.4V1032Q119 1035 122 1035H137Q140 1035 140 1038V1039.6Q140 1042.6 137 1042.6H117" fill="none" stroke="url(#fb)" stroke-width="3.8" stroke-linejoin="round" stroke-linecap="butt"/>
<path d="M148.7 1027.4H164.5Q167.0 1027.4 167.0 1029.9V1033Q167.0 1035 165.5 1035Q168.5 1035 168.5 1037.5V1040.1Q168.5 1042.6 165.5 1042.6H148.7ZM148.7 1035H165.5" fill="none" stroke="url(#fy)" stroke-width="3.8" stroke-linejoin="round" stroke-linecap="butt"/>
<path d="M175.3 1044.5V1030.4Q175.3 1027.4 178.3 1027.4H192.0Q195.0 1027.4 195.0 1030.4V1044.5M175.3 1036H195.0" fill="none" stroke="url(#fy)" stroke-width="3.8" stroke-linejoin="round" stroke-linecap="butt"/>
<path d="M202 1044.5V1027.4H218.8Q221.8 1027.4 221.8 1030.4V1044.5" fill="none" stroke="url(#fy)" stroke-width="3.8" stroke-linejoin="round" stroke-linecap="butt"/>
<path d="M228.7 1044.5V1030.4Q228.7 1027.4 231.7 1027.4H246.39999999999998Q249.39999999999998 1027.4 249.39999999999998 1030.4V1044.5M228.7 1036H249.39999999999998" fill="none" stroke="url(#fy)" stroke-width="3.8" stroke-linejoin="round" stroke-linecap="butt"/>
<path d="M256.3 1044.5V1027.4H273.0Q276.0 1027.4 276.0 1030.4V1044.5" fill="none" stroke="url(#fy)" stroke-width="3.8" stroke-linejoin="round" stroke-linecap="butt"/>
<path d="M283 1044.5V1030.4Q283 1027.4 286 1027.4H303.6Q306.6 1027.4 306.6 1030.4V1044.5M283 1036H306.6" fill="none" stroke="url(#fy)" stroke-width="3.8" stroke-linejoin="round" stroke-linecap="butt"/>
</svg>
</body></html>
